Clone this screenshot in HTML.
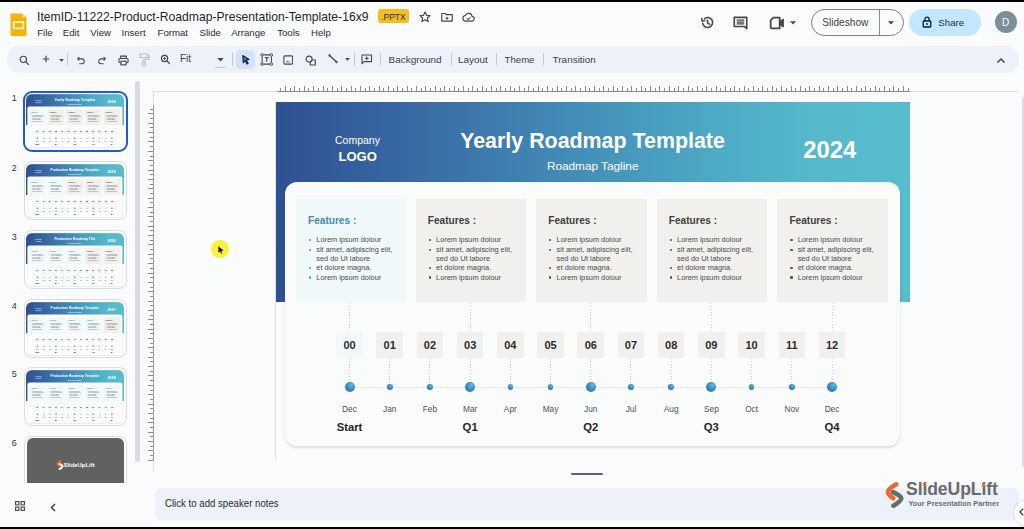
<!DOCTYPE html>
<html><head><meta charset="utf-8"><style>
html,body{margin:0;padding:0;}
body{width:1024px;height:529px;position:relative;overflow:hidden;background:#f9fbfd;font-family:'Liberation Sans', sans-serif;}
.t{position:absolute;white-space:nowrap;}
.b{position:absolute;}
</style></head><body>
<div class="b" style="left:0.00px;top:0.00px;width:1024.00px;height:2.00px;background:#000;"></div><div class="b" style="left:0.00px;top:527.00px;width:1024.00px;height:2.00px;background:#000;"></div><svg class="b" style="left:9px;top:12px" width="19" height="25" viewBox="0 0 19 25">
<path d="M1.5 1.5 h11.5 l4.5 4.5 v17 a1 1 0 0 1 -1 1 h-14 a1 1 0 0 1 -1 -1 z" fill="#f4b400"/>
<path d="M13 1.5 v4.5 h4.5 z" fill="#f7cb4d"/>
<rect x="4.6" y="10.2" width="9.8" height="6.2" fill="none" stroke="#fff" stroke-width="1.5"/>
</svg><div class="t" style="left:37.00px;top:10.70px;font-size:12.17px;line-height:12.17px;color:#1f1f1f;font-weight:400;">ItemID-11222-Product-Roadmap-Presentation-Template-16x9</div><div class="b" style="left:378.00px;top:9.30px;width:30.80px;height:14.00px;background:#f2bf1f;border-radius:3px;"></div><div class="t" style="left:193.40px;width:400px;text-align:center;top:13.00px;font-size:8.5px;line-height:8.5px;color:#2a2a2a;font-weight:400;">.PPTX</div><svg class="b" style="left:418px;top:10px" width="14" height="14" viewBox="0 0 24 24"><path d="M12 3.5l2.6 5.6 6.1.6-4.6 4.1 1.3 6-5.4-3.1-5.4 3.1 1.3-6-4.6-4.1 6.1-.6z" fill="none" stroke="#444746" stroke-width="2" stroke-linejoin="round"/></svg><svg class="b" style="left:440px;top:10px" width="14" height="14" viewBox="0 0 24 24"><path d="M3 6h6l2 2h10v11H3z" fill="none" stroke="#444746" stroke-width="2" stroke-linejoin="round"/><path d="M12 11.5v5M9.5 14h5" stroke="#444746" stroke-width="1.8"/></svg><svg class="b" style="left:461px;top:10px" width="15" height="14" viewBox="0 0 24 24"><path d="M6.5 19h11a4 4 0 0 0 .6-8A6 6 0 0 0 6.6 9.5 4.8 4.8 0 0 0 6.5 19z" fill="none" stroke="#444746" stroke-width="2"/><path d="M9 14.5l2.2 2 4-4" fill="none" stroke="#444746" stroke-width="1.8"/></svg><div class="t" style="left:37.20px;top:28.03px;font-size:9.65px;line-height:9.65px;color:#2d2d2d;font-weight:400;">File</div><div class="t" style="left:62.80px;top:28.03px;font-size:9.65px;line-height:9.65px;color:#2d2d2d;font-weight:400;">Edit</div><div class="t" style="left:90.30px;top:28.03px;font-size:9.65px;line-height:9.65px;color:#2d2d2d;font-weight:400;">View</div><div class="t" style="left:121.50px;top:28.03px;font-size:9.65px;line-height:9.65px;color:#2d2d2d;font-weight:400;">Insert</div><div class="t" style="left:157.50px;top:28.03px;font-size:9.65px;line-height:9.65px;color:#2d2d2d;font-weight:400;">Format</div><div class="t" style="left:199.50px;top:28.03px;font-size:9.65px;line-height:9.65px;color:#2d2d2d;font-weight:400;">Slide</div><div class="t" style="left:231.20px;top:28.03px;font-size:9.65px;line-height:9.65px;color:#2d2d2d;font-weight:400;">Arrange</div><div class="t" style="left:277.20px;top:28.03px;font-size:9.65px;line-height:9.65px;color:#2d2d2d;font-weight:400;">Tools</div><div class="t" style="left:311.00px;top:28.03px;font-size:9.65px;line-height:9.65px;color:#2d2d2d;font-weight:400;">Help</div><svg class="b" style="left:699.5px;top:14.5px" width="15" height="15" viewBox="0 0 24 24"><path d="M4.2 12.5a8 8 0 1 0 2.5-6.4" fill="none" stroke="#444746" stroke-width="2.6"/><path d="M2.5 4.5l1 5.2 5-1.2" fill="none" stroke="#444746" stroke-width="2.4"/><path d="M12 7v5.5l4 3" fill="none" stroke="#444746" stroke-width="2.5"/></svg><svg class="b" style="left:732.5px;top:15.5px" width="15" height="14" viewBox="0 0 24 22"><path d="M2 2h20v18l-4-3.5H2z" fill="none" stroke="#444746" stroke-width="2.6" stroke-linejoin="round"/><path d="M6 6.5h12M6 9.5h12M6 12.5h12" stroke="#444746" stroke-width="1.9"/></svg><svg class="b" style="left:769px;top:15.5px" width="16" height="14" viewBox="0 0 24 21"><path d="M6.5 2.5H16v16H4a1.5 1.5 0 0 1-1.5-1.5V6.5z" fill="none" stroke="#444746" stroke-width="2.6" stroke-linejoin="round"/><path d="M16 8l5.5-3.5v12L16 13z" fill="#444746" stroke="#444746" stroke-width="1.5" stroke-linejoin="round"/></svg><svg class="b" style="left:790px;top:20.5px" width="6" height="4" viewBox="0 0 8 5"><path d="M0 0h8L4 4.5z" fill="#444746"/></svg><div class="b" style="left:811.00px;top:9.00px;width:92.50px;height:27.00px;border:1px solid #7d7f80;border-radius:13.5px;box-sizing:border-box;"></div><div class="b" style="left:879.00px;top:9.50px;width:1.00px;height:26.00px;background:#8a8c8d;"></div><div class="t" style="left:645.30px;width:400px;text-align:center;top:18.05px;font-size:10.1px;line-height:10.1px;color:#3c3f42;font-weight:400;">Slideshow</div><svg class="b" style="left:888px;top:20.5px" width="6" height="4" viewBox="0 0 8 5"><path d="M0 0h8L4 4.5z" fill="#444746"/></svg><div class="b" style="left:909.00px;top:9.00px;width:72.00px;height:27.00px;background:#c2e7ff;border-radius:13.5px;"></div><svg class="b" style="left:921.5px;top:16px" width="10" height="12" viewBox="0 0 10 12"><rect x="1.2" y="5" width="7.6" height="6" rx="0.8" fill="none" stroke="#001d35" stroke-width="1.3"/><path d="M2.9 5V3.3a2.1 2.1 0 0 1 4.2 0V5" fill="none" stroke="#001d35" stroke-width="1.3"/><circle cx="5" cy="8" r="0.9" fill="#001d35"/></svg><div class="t" style="left:751.30px;width:400px;text-align:center;top:17.69px;font-size:9.7px;line-height:9.7px;color:#17324a;font-weight:400;">Share</div><div class="b" style="left:994.50px;top:11.00px;width:22.00px;height:22.00px;background:#7a8f99;border-radius:50%;"></div><div class="t" style="left:805.50px;width:400px;text-align:center;top:17.54px;font-size:10px;line-height:10px;color:#fff;font-weight:400;">D</div><div class="b" style="left:6.50px;top:46.00px;width:1012.00px;height:26.50px;background:#edf2fa;border-radius:13px;"></div><svg class="b" style="left:18.5px;top:54.5px" width="11" height="11" viewBox="0 0 24 24"><circle cx="9.5" cy="9.5" r="6.8" fill="none" stroke="#444746" stroke-width="2.6"/><path d="M14.5 14.5l7 7" stroke="#444746" stroke-width="2.8"/></svg><svg class="b" style="left:42.3px;top:55.3px" width="8" height="8" viewBox="0 0 24 24"><path d="M12 2v20M2 12h20" stroke="#444746" stroke-width="3.6"/></svg><svg class="b" style="left:58.7px;top:58.6px" width="5" height="3" viewBox="0 0 8 5"><path d="M0 0h8L4 4.5z" fill="#444746"/></svg><div class="b" style="left:67.00px;top:53.00px;width:1.00px;height:13.00px;background:#c7c7c7;"></div><svg class="b" style="left:76px;top:55.5px" width="10" height="9" viewBox="0 0 24 22"><path d="M8 3L4 7l4 4" fill="none" stroke="#444746" stroke-width="2.6"/><path d="M4.5 7H14a6 6 0 0 1 0 12H8" fill="none" stroke="#444746" stroke-width="2.6"/></svg><svg class="b" style="left:97px;top:55.5px" width="10" height="9" viewBox="0 0 24 22"><path d="M16 3l4 4-4 4" fill="none" stroke="#444746" stroke-width="2.6"/><path d="M19.5 7H10a6 6 0 0 0 0 12h6" fill="none" stroke="#444746" stroke-width="2.6"/></svg><svg class="b" style="left:117.5px;top:54.5px" width="11" height="11" viewBox="0 0 24 24"><path d="M6 7V2.5h12V7" fill="none" stroke="#444746" stroke-width="2.4"/><rect x="2" y="7.5" width="20" height="9.5" rx="2.5" fill="none" stroke="#444746" stroke-width="2.4"/><rect x="6.5" y="13.5" width="11" height="8" fill="#edf2fa" stroke="#444746" stroke-width="2.4"/></svg><svg class="b" style="left:138px;top:52.5px" width="12" height="14" viewBox="0 0 24 28"><rect x="4" y="2" width="16" height="7" rx="1.5" fill="none" stroke="#b9bcbf" stroke-width="2.4"/><path d="M20 5.5h2v7H12v4" fill="none" stroke="#b9bcbf" stroke-width="2.4"/><rect x="9.5" y="16.5" width="5" height="9" rx="1.5" fill="none" stroke="#b9bcbf" stroke-width="2.4"/></svg><svg class="b" style="left:160px;top:54px" width="11.5" height="11.5" viewBox="0 0 24 24"><circle cx="9.5" cy="9.5" r="6.5" fill="none" stroke="#444746" stroke-width="2.4"/><path d="M14.5 14.5l6 6" stroke="#444746" stroke-width="2.6"/><path d="M9.5 6.5v6M6.5 9.5h6" stroke="#444746" stroke-width="2"/></svg><div class="t" style="left:180.00px;top:54.23px;font-size:10px;line-height:10px;color:#3c4043;font-weight:400;">Fit</div><svg class="b" style="left:217px;top:57.5px" width="7" height="4" viewBox="0 0 8 5"><path d="M0 0h8L4 4.5z" fill="#444746"/></svg><div class="b" style="left:215.00px;top:66.50px;width:11.00px;height:1.00px;background:#c7c7c7;"></div><div class="b" style="left:232.00px;top:53.00px;width:1.00px;height:13.00px;background:#c7c7c7;"></div><div class="b" style="left:236.00px;top:49.50px;width:19.00px;height:19.50px;background:#d3e3fd;border-radius:4px;"></div><svg class="b" style="left:240.5px;top:54px" width="10" height="12" viewBox="0 0 20 24"><path d="M3.5 3l12.5 8-5.2 1.3 3.6 6.5-2.4 1.4-3.6-6.5L4.5 17.5z" fill="#5b6f99" stroke="#0f2350" stroke-width="2.2" stroke-linejoin="round"/></svg><svg class="b" style="left:259.8px;top:53px" width="13.5" height="13" viewBox="0 0 24 24"><path d="M6 3.5h12M6 20.5h12M3.5 6v12M20.5 6v12" stroke="#444746" stroke-width="2"/><circle cx="3.5" cy="3.5" r="2.3" fill="#edf2fa" stroke="#444746" stroke-width="1.8"/><circle cx="20.5" cy="3.5" r="2.3" fill="#edf2fa" stroke="#444746" stroke-width="1.8"/><circle cx="3.5" cy="20.5" r="2.3" fill="#edf2fa" stroke="#444746" stroke-width="1.8"/><circle cx="20.5" cy="20.5" r="2.3" fill="#edf2fa" stroke="#444746" stroke-width="1.8"/><path d="M8.5 8.5h7M12 8.5v7.5" stroke="#444746" stroke-width="2"/></svg><svg class="b" style="left:282.6px;top:54.6px" width="10.5" height="10" viewBox="0 0 24 23"><rect x="2" y="2" width="20" height="19" rx="2.5" fill="none" stroke="#444746" stroke-width="2.4"/><path d="M7 16.5l2.5-3 2 2.2 1.8-1.6 3.5 2.4z" fill="#444746"/></svg><svg class="b" style="left:305px;top:54.5px" width="11.5" height="11" viewBox="0 0 24 23"><circle cx="8.5" cy="8.5" r="6.3" fill="none" stroke="#444746" stroke-width="2.4"/><path d="M14.8 10.5H21.5V21H11V14.8" fill="none" stroke="#444746" stroke-width="2.4"/></svg><svg class="b" style="left:327.5px;top:54.3px" width="10" height="9.5" viewBox="0 0 20 19"><path d="M3 3l14 13" stroke="#444746" stroke-width="2.6"/><circle cx="3" cy="3" r="2.3" fill="#444746"/><circle cx="17" cy="16" r="2.3" fill="#444746"/></svg><svg class="b" style="left:344.6px;top:58.4px" width="5" height="3" viewBox="0 0 8 5"><path d="M0 0h8L4 4.5z" fill="#444746"/></svg><div class="b" style="left:354.00px;top:53.00px;width:1.00px;height:13.00px;background:#c7c7c7;"></div><svg class="b" style="left:361px;top:54.3px" width="11.5" height="10.5" viewBox="0 0 24 22"><path d="M2 2h20v14H6l-4 4.5z" fill="none" stroke="#444746" stroke-width="2.3" stroke-linejoin="round"/><path d="M12 5v8M8 9h8" stroke="#444746" stroke-width="2.3"/></svg><div class="b" style="left:380.00px;top:53.00px;width:1.00px;height:13.00px;background:#c7c7c7;"></div><div class="t" style="left:388.60px;top:54.88px;font-size:9.95px;line-height:9.95px;color:#3c4043;font-weight:400;">Background</div><div class="t" style="left:458.00px;top:54.88px;font-size:9.95px;line-height:9.95px;color:#3c4043;font-weight:400;">Layout</div><div class="t" style="left:504.60px;top:55.17px;font-size:9.6px;line-height:9.6px;color:#3c4043;font-weight:400;">Theme</div><div class="t" style="left:552.60px;top:54.88px;font-size:9.95px;line-height:9.95px;color:#3c4043;font-weight:400;">Transition</div><div class="b" style="left:450.50px;top:53.00px;width:1.00px;height:13.00px;background:#c7c7c7;"></div><div class="b" style="left:495.50px;top:53.00px;width:1.00px;height:13.00px;background:#c7c7c7;"></div><div class="b" style="left:543.00px;top:53.00px;width:1.00px;height:13.00px;background:#c7c7c7;"></div><svg class="b" style="left:995.5px;top:56.5px" width="10" height="7" viewBox="0 0 10 7"><path d="M1.5 5.5l3.5-3.5 3.5 3.5" fill="none" stroke="#444746" stroke-width="1.5"/></svg><div class="b" style="left:134.50px;top:81.00px;width:5.50px;height:381.00px;background:#dadce0;border-radius:3px;"></div><div class="b" style="left:0;top:80px;width:133px;height:403px;overflow:hidden"><div class="b" style="left:0;top:-80px;width:133px;height:529px"><div class="t" style="left:-185.80px;width:400px;text-align:center;top:94.48px;font-size:9px;line-height:9px;color:#333537;font-weight:400;">1</div><div class="b" style="left:22.80px;top:90.80px;width:105.20px;height:61.50px;border:2.2px solid #1f5bc9;border-radius:9px;box-sizing:border-box;"></div><div class="b" style="left:26.3px;top:93.80px;width:98px;height:55.4px;overflow:hidden;border-radius:6px;"><div class="b" style="left:0;top:0;width:634px;height:358px;transform:scale(0.15457);transform-origin:0 0;background:#fbfbfb"><div class="b" style="left:0.00px;top:0.80px;width:634.00px;height:200.40px;background:linear-gradient(90deg,#2e5092 0%,#3a6ea7 25%,#4491ba 50%,#4dabc5 70%,#55b9cb 85%,#57bccc 100%);"></div><div class="t" style="left:-118.50px;width:400px;text-align:center;top:33.91px;font-size:10.5px;line-height:10.5px;color:#fff;font-weight:400;">Company</div><div class="t" style="left:-118.40px;width:400px;text-align:center;top:49.40px;font-size:13px;line-height:13px;color:#fff;font-weight:700;">LOGO</div><div class="t" style="left:116.50px;width:400px;text-align:center;top:29.58px;font-size:21.4px;line-height:21.4px;color:#fff;font-weight:700;">Yearly Roadmap Template</div><div class="t" style="left:116.70px;width:400px;text-align:center;top:59.81px;font-size:11.8px;line-height:11.8px;color:#fff;font-weight:400;">Roadmap Tagline</div><div class="t" style="left:353.80px;width:400px;text-align:center;top:37.25px;font-size:23.8px;line-height:23.8px;color:#fff;font-weight:700;">2024</div><div class="b" style="left:9.00px;top:81.00px;width:615.00px;height:264.00px;background:#fafbfb;border-radius:12px;box-shadow:0 2px 3px rgba(0,0,0,0.13);"></div><div class="b" style="left:20.00px;top:98.20px;width:110.40px;height:103.30px;background:#f0f8fa;"></div><div class="t" style="left:32.00px;top:114.95px;font-size:10.1px;line-height:10.1px;color:#3d8db0;font-weight:700;">Features :</div><div class="b" style="left:33.00px;top:137.60px;width:2.20px;height:2.20px;border-radius:50%;background:#4aa0c0;"></div><div class="t" style="left:40.30px;top:134.98px;font-size:7.35px;line-height:7.35px;color:#474b4d;font-weight:400;">Lorem ipsum dolour</div><div class="b" style="left:33.00px;top:147.60px;width:2.20px;height:2.20px;border-radius:50%;background:#4aa0c0;"></div><div class="t" style="left:40.30px;top:144.98px;font-size:7.35px;line-height:7.35px;color:#474b4d;font-weight:400;">sit amet, adipiscing elit,</div><div class="t" style="left:40.30px;top:153.98px;font-size:7.35px;line-height:7.35px;color:#474b4d;font-weight:400;">sed do Ut labore</div><div class="b" style="left:33.00px;top:166.10px;width:2.20px;height:2.20px;border-radius:50%;background:#4aa0c0;"></div><div class="t" style="left:40.30px;top:163.48px;font-size:7.35px;line-height:7.35px;color:#474b4d;font-weight:400;">et dolore magna.</div><div class="b" style="left:33.00px;top:175.40px;width:2.20px;height:2.20px;border-radius:50%;background:#4aa0c0;"></div><div class="t" style="left:40.30px;top:172.78px;font-size:7.35px;line-height:7.35px;color:#474b4d;font-weight:400;">Lorem ipsum dolour</div><div class="b" style="left:139.80px;top:98.20px;width:110.40px;height:103.30px;background:#f1f0ed;"></div><div class="t" style="left:151.80px;top:114.95px;font-size:10.1px;line-height:10.1px;color:#3f3f3f;font-weight:700;">Features :</div><div class="b" style="left:152.80px;top:137.60px;width:2.20px;height:2.20px;border-radius:50%;background:#555;"></div><div class="t" style="left:160.10px;top:134.98px;font-size:7.35px;line-height:7.35px;color:#474b4d;font-weight:400;">Lorem ipsum dolour</div><div class="b" style="left:152.80px;top:147.60px;width:2.20px;height:2.20px;border-radius:50%;background:#555;"></div><div class="t" style="left:160.10px;top:144.98px;font-size:7.35px;line-height:7.35px;color:#474b4d;font-weight:400;">sit amet, adipiscing elit,</div><div class="t" style="left:160.10px;top:153.98px;font-size:7.35px;line-height:7.35px;color:#474b4d;font-weight:400;">sed do Ut labore</div><div class="b" style="left:152.80px;top:166.10px;width:2.20px;height:2.20px;border-radius:50%;background:#555;"></div><div class="t" style="left:160.10px;top:163.48px;font-size:7.35px;line-height:7.35px;color:#474b4d;font-weight:400;">et dolore magna.</div><div class="b" style="left:152.80px;top:175.40px;width:2.20px;height:2.20px;border-radius:50%;background:#555;"></div><div class="t" style="left:160.10px;top:172.78px;font-size:7.35px;line-height:7.35px;color:#474b4d;font-weight:400;">Lorem ipsum dolour</div><div class="b" style="left:260.30px;top:98.20px;width:110.40px;height:103.30px;background:#f1f0ed;"></div><div class="t" style="left:272.30px;top:114.95px;font-size:10.1px;line-height:10.1px;color:#3f3f3f;font-weight:700;">Features :</div><div class="b" style="left:273.30px;top:137.60px;width:2.20px;height:2.20px;border-radius:50%;background:#555;"></div><div class="t" style="left:280.60px;top:134.98px;font-size:7.35px;line-height:7.35px;color:#474b4d;font-weight:400;">Lorem ipsum dolour</div><div class="b" style="left:273.30px;top:147.60px;width:2.20px;height:2.20px;border-radius:50%;background:#555;"></div><div class="t" style="left:280.60px;top:144.98px;font-size:7.35px;line-height:7.35px;color:#474b4d;font-weight:400;">sit amet, adipiscing elit,</div><div class="t" style="left:280.60px;top:153.98px;font-size:7.35px;line-height:7.35px;color:#474b4d;font-weight:400;">sed do Ut labore</div><div class="b" style="left:273.30px;top:166.10px;width:2.20px;height:2.20px;border-radius:50%;background:#555;"></div><div class="t" style="left:280.60px;top:163.48px;font-size:7.35px;line-height:7.35px;color:#474b4d;font-weight:400;">et dolore magna.</div><div class="b" style="left:273.30px;top:175.40px;width:2.20px;height:2.20px;border-radius:50%;background:#555;"></div><div class="t" style="left:280.60px;top:172.78px;font-size:7.35px;line-height:7.35px;color:#474b4d;font-weight:400;">Lorem ipsum dolour</div><div class="b" style="left:380.80px;top:98.20px;width:110.40px;height:103.30px;background:#f1f0ed;"></div><div class="t" style="left:392.80px;top:114.95px;font-size:10.1px;line-height:10.1px;color:#3f3f3f;font-weight:700;">Features :</div><div class="b" style="left:393.80px;top:137.60px;width:2.20px;height:2.20px;border-radius:50%;background:#555;"></div><div class="t" style="left:401.10px;top:134.98px;font-size:7.35px;line-height:7.35px;color:#474b4d;font-weight:400;">Lorem ipsum dolour</div><div class="b" style="left:393.80px;top:147.60px;width:2.20px;height:2.20px;border-radius:50%;background:#555;"></div><div class="t" style="left:401.10px;top:144.98px;font-size:7.35px;line-height:7.35px;color:#474b4d;font-weight:400;">sit amet, adipiscing elit,</div><div class="t" style="left:401.10px;top:153.98px;font-size:7.35px;line-height:7.35px;color:#474b4d;font-weight:400;">sed do Ut labore</div><div class="b" style="left:393.80px;top:166.10px;width:2.20px;height:2.20px;border-radius:50%;background:#555;"></div><div class="t" style="left:401.10px;top:163.48px;font-size:7.35px;line-height:7.35px;color:#474b4d;font-weight:400;">et dolore magna.</div><div class="b" style="left:393.80px;top:175.40px;width:2.20px;height:2.20px;border-radius:50%;background:#555;"></div><div class="t" style="left:401.10px;top:172.78px;font-size:7.35px;line-height:7.35px;color:#474b4d;font-weight:400;">Lorem ipsum dolour</div><div class="b" style="left:501.40px;top:98.20px;width:110.40px;height:103.30px;background:#f1f0ed;"></div><div class="t" style="left:513.40px;top:114.95px;font-size:10.1px;line-height:10.1px;color:#3f3f3f;font-weight:700;">Features :</div><div class="b" style="left:514.40px;top:137.60px;width:2.20px;height:2.20px;border-radius:50%;background:#555;"></div><div class="t" style="left:521.70px;top:134.98px;font-size:7.35px;line-height:7.35px;color:#474b4d;font-weight:400;">Lorem ipsum dolour</div><div class="b" style="left:514.40px;top:147.60px;width:2.20px;height:2.20px;border-radius:50%;background:#555;"></div><div class="t" style="left:521.70px;top:144.98px;font-size:7.35px;line-height:7.35px;color:#474b4d;font-weight:400;">sit amet, adipiscing elit,</div><div class="t" style="left:521.70px;top:153.98px;font-size:7.35px;line-height:7.35px;color:#474b4d;font-weight:400;">sed do Ut labore</div><div class="b" style="left:514.40px;top:166.10px;width:2.20px;height:2.20px;border-radius:50%;background:#555;"></div><div class="t" style="left:521.70px;top:163.48px;font-size:7.35px;line-height:7.35px;color:#474b4d;font-weight:400;">et dolore magna.</div><div class="b" style="left:514.40px;top:175.40px;width:2.20px;height:2.20px;border-radius:50%;background:#555;"></div><div class="t" style="left:521.70px;top:172.78px;font-size:7.35px;line-height:7.35px;color:#474b4d;font-weight:400;">Lorem ipsum dolour</div><div class="b" style="left:73.00px;top:201.50px;width:1.00px;height:29.00px;background:repeating-linear-gradient(to bottom,#cfcfcf 0 1px,transparent 1px 3px);"></div><div class="b" style="left:73.00px;top:256.50px;width:1.00px;height:28.00px;background:repeating-linear-gradient(to bottom,#cfcfcf 0 1px,transparent 1px 3px);"></div><div class="b" style="left:113.21px;top:256.50px;width:1.00px;height:28.00px;background:repeating-linear-gradient(to bottom,#cfcfcf 0 1px,transparent 1px 3px);"></div><div class="b" style="left:153.42px;top:256.50px;width:1.00px;height:28.00px;background:repeating-linear-gradient(to bottom,#cfcfcf 0 1px,transparent 1px 3px);"></div><div class="b" style="left:193.63px;top:201.50px;width:1.00px;height:29.00px;background:repeating-linear-gradient(to bottom,#cfcfcf 0 1px,transparent 1px 3px);"></div><div class="b" style="left:193.63px;top:256.50px;width:1.00px;height:28.00px;background:repeating-linear-gradient(to bottom,#cfcfcf 0 1px,transparent 1px 3px);"></div><div class="b" style="left:233.84px;top:256.50px;width:1.00px;height:28.00px;background:repeating-linear-gradient(to bottom,#cfcfcf 0 1px,transparent 1px 3px);"></div><div class="b" style="left:274.05px;top:256.50px;width:1.00px;height:28.00px;background:repeating-linear-gradient(to bottom,#cfcfcf 0 1px,transparent 1px 3px);"></div><div class="b" style="left:314.26px;top:201.50px;width:1.00px;height:29.00px;background:repeating-linear-gradient(to bottom,#cfcfcf 0 1px,transparent 1px 3px);"></div><div class="b" style="left:314.26px;top:256.50px;width:1.00px;height:28.00px;background:repeating-linear-gradient(to bottom,#cfcfcf 0 1px,transparent 1px 3px);"></div><div class="b" style="left:354.47px;top:256.50px;width:1.00px;height:28.00px;background:repeating-linear-gradient(to bottom,#cfcfcf 0 1px,transparent 1px 3px);"></div><div class="b" style="left:394.68px;top:256.50px;width:1.00px;height:28.00px;background:repeating-linear-gradient(to bottom,#cfcfcf 0 1px,transparent 1px 3px);"></div><div class="b" style="left:434.89px;top:201.50px;width:1.00px;height:29.00px;background:repeating-linear-gradient(to bottom,#cfcfcf 0 1px,transparent 1px 3px);"></div><div class="b" style="left:434.89px;top:256.50px;width:1.00px;height:28.00px;background:repeating-linear-gradient(to bottom,#cfcfcf 0 1px,transparent 1px 3px);"></div><div class="b" style="left:475.10px;top:256.50px;width:1.00px;height:28.00px;background:repeating-linear-gradient(to bottom,#cfcfcf 0 1px,transparent 1px 3px);"></div><div class="b" style="left:515.31px;top:256.50px;width:1.00px;height:28.00px;background:repeating-linear-gradient(to bottom,#cfcfcf 0 1px,transparent 1px 3px);"></div><div class="b" style="left:555.52px;top:201.50px;width:1.00px;height:29.00px;background:repeating-linear-gradient(to bottom,#cfcfcf 0 1px,transparent 1px 3px);"></div><div class="b" style="left:555.52px;top:256.50px;width:1.00px;height:28.00px;background:repeating-linear-gradient(to bottom,#cfcfcf 0 1px,transparent 1px 3px);"></div><div class="b" style="left:73.50px;top:285.50px;width:482.52px;height:1.00px;background:repeating-linear-gradient(to right,#e2e2e2 0 2px,transparent 2px 3px);"></div><div class="b" style="left:60.20px;top:230.50px;width:26.60px;height:26.50px;background:#f0f8fa;"></div><div class="t" style="left:-126.50px;width:400px;text-align:center;top:239.19px;font-size:11px;line-height:11px;color:#2b2b2b;font-weight:700;">00</div><div class="b" style="left:68.50px;top:281.00px;width:10.00px;height:10.00px;border-radius:50%;background:radial-gradient(circle at 65% 32%,#66b9dc 0%,#3c92c2 40%,#2a67a2 100%);"></div><div class="t" style="left:-126.50px;width:400px;text-align:center;top:303.97px;font-size:8.3px;line-height:8.3px;color:#505050;font-weight:400;">Dec</div><div class="t" style="left:-126.50px;width:400px;text-align:center;top:320.63px;font-size:11.3px;line-height:11.3px;color:#262626;font-weight:700;">Start</div><div class="b" style="left:100.41px;top:230.50px;width:26.60px;height:26.50px;background:#f1f0ed;"></div><div class="t" style="left:-86.29px;width:400px;text-align:center;top:239.19px;font-size:11px;line-height:11px;color:#2b2b2b;font-weight:700;">01</div><div class="b" style="left:110.91px;top:283.20px;width:5.60px;height:5.60px;border-radius:50%;background:radial-gradient(circle at 65% 32%,#66b9dc 0%,#3c92c2 40%,#2a67a2 100%);"></div><div class="t" style="left:-86.29px;width:400px;text-align:center;top:303.97px;font-size:8.3px;line-height:8.3px;color:#505050;font-weight:400;">Jan</div><div class="b" style="left:140.62px;top:230.50px;width:26.60px;height:26.50px;background:#f1f0ed;"></div><div class="t" style="left:-46.08px;width:400px;text-align:center;top:239.19px;font-size:11px;line-height:11px;color:#2b2b2b;font-weight:700;">02</div><div class="b" style="left:151.12px;top:283.20px;width:5.60px;height:5.60px;border-radius:50%;background:radial-gradient(circle at 65% 32%,#66b9dc 0%,#3c92c2 40%,#2a67a2 100%);"></div><div class="t" style="left:-46.08px;width:400px;text-align:center;top:303.97px;font-size:8.3px;line-height:8.3px;color:#505050;font-weight:400;">Feb</div><div class="b" style="left:180.83px;top:230.50px;width:26.60px;height:26.50px;background:#f1f0ed;"></div><div class="t" style="left:-5.87px;width:400px;text-align:center;top:239.19px;font-size:11px;line-height:11px;color:#2b2b2b;font-weight:700;">03</div><div class="b" style="left:189.13px;top:281.00px;width:10.00px;height:10.00px;border-radius:50%;background:radial-gradient(circle at 65% 32%,#66b9dc 0%,#3c92c2 40%,#2a67a2 100%);"></div><div class="t" style="left:-5.87px;width:400px;text-align:center;top:303.97px;font-size:8.3px;line-height:8.3px;color:#505050;font-weight:400;">Mar</div><div class="t" style="left:-5.87px;width:400px;text-align:center;top:320.63px;font-size:11.3px;line-height:11.3px;color:#262626;font-weight:700;">Q1</div><div class="b" style="left:221.04px;top:230.50px;width:26.60px;height:26.50px;background:#f1f0ed;"></div><div class="t" style="left:34.34px;width:400px;text-align:center;top:239.19px;font-size:11px;line-height:11px;color:#2b2b2b;font-weight:700;">04</div><div class="b" style="left:231.54px;top:283.20px;width:5.60px;height:5.60px;border-radius:50%;background:radial-gradient(circle at 65% 32%,#66b9dc 0%,#3c92c2 40%,#2a67a2 100%);"></div><div class="t" style="left:34.34px;width:400px;text-align:center;top:303.97px;font-size:8.3px;line-height:8.3px;color:#505050;font-weight:400;">Apr</div><div class="b" style="left:261.25px;top:230.50px;width:26.60px;height:26.50px;background:#f1f0ed;"></div><div class="t" style="left:74.55px;width:400px;text-align:center;top:239.19px;font-size:11px;line-height:11px;color:#2b2b2b;font-weight:700;">05</div><div class="b" style="left:271.75px;top:283.20px;width:5.60px;height:5.60px;border-radius:50%;background:radial-gradient(circle at 65% 32%,#66b9dc 0%,#3c92c2 40%,#2a67a2 100%);"></div><div class="t" style="left:74.55px;width:400px;text-align:center;top:303.97px;font-size:8.3px;line-height:8.3px;color:#505050;font-weight:400;">May</div><div class="b" style="left:301.46px;top:230.50px;width:26.60px;height:26.50px;background:#f1f0ed;"></div><div class="t" style="left:114.76px;width:400px;text-align:center;top:239.19px;font-size:11px;line-height:11px;color:#2b2b2b;font-weight:700;">06</div><div class="b" style="left:309.76px;top:281.00px;width:10.00px;height:10.00px;border-radius:50%;background:radial-gradient(circle at 65% 32%,#66b9dc 0%,#3c92c2 40%,#2a67a2 100%);"></div><div class="t" style="left:114.76px;width:400px;text-align:center;top:303.97px;font-size:8.3px;line-height:8.3px;color:#505050;font-weight:400;">Jun</div><div class="t" style="left:114.76px;width:400px;text-align:center;top:320.63px;font-size:11.3px;line-height:11.3px;color:#262626;font-weight:700;">Q2</div><div class="b" style="left:341.67px;top:230.50px;width:26.60px;height:26.50px;background:#f1f0ed;"></div><div class="t" style="left:154.97px;width:400px;text-align:center;top:239.19px;font-size:11px;line-height:11px;color:#2b2b2b;font-weight:700;">07</div><div class="b" style="left:352.17px;top:283.20px;width:5.60px;height:5.60px;border-radius:50%;background:radial-gradient(circle at 65% 32%,#66b9dc 0%,#3c92c2 40%,#2a67a2 100%);"></div><div class="t" style="left:154.97px;width:400px;text-align:center;top:303.97px;font-size:8.3px;line-height:8.3px;color:#505050;font-weight:400;">Jul</div><div class="b" style="left:381.88px;top:230.50px;width:26.60px;height:26.50px;background:#f1f0ed;"></div><div class="t" style="left:195.18px;width:400px;text-align:center;top:239.19px;font-size:11px;line-height:11px;color:#2b2b2b;font-weight:700;">08</div><div class="b" style="left:392.38px;top:283.20px;width:5.60px;height:5.60px;border-radius:50%;background:radial-gradient(circle at 65% 32%,#66b9dc 0%,#3c92c2 40%,#2a67a2 100%);"></div><div class="t" style="left:195.18px;width:400px;text-align:center;top:303.97px;font-size:8.3px;line-height:8.3px;color:#505050;font-weight:400;">Aug</div><div class="b" style="left:422.09px;top:230.50px;width:26.60px;height:26.50px;background:#f1f0ed;"></div><div class="t" style="left:235.39px;width:400px;text-align:center;top:239.19px;font-size:11px;line-height:11px;color:#2b2b2b;font-weight:700;">09</div><div class="b" style="left:430.39px;top:281.00px;width:10.00px;height:10.00px;border-radius:50%;background:radial-gradient(circle at 65% 32%,#66b9dc 0%,#3c92c2 40%,#2a67a2 100%);"></div><div class="t" style="left:235.39px;width:400px;text-align:center;top:303.97px;font-size:8.3px;line-height:8.3px;color:#505050;font-weight:400;">Sep</div><div class="t" style="left:235.39px;width:400px;text-align:center;top:320.63px;font-size:11.3px;line-height:11.3px;color:#262626;font-weight:700;">Q3</div><div class="b" style="left:462.30px;top:230.50px;width:26.60px;height:26.50px;background:#f1f0ed;"></div><div class="t" style="left:275.60px;width:400px;text-align:center;top:239.19px;font-size:11px;line-height:11px;color:#2b2b2b;font-weight:700;">10</div><div class="b" style="left:472.80px;top:283.20px;width:5.60px;height:5.60px;border-radius:50%;background:radial-gradient(circle at 65% 32%,#66b9dc 0%,#3c92c2 40%,#2a67a2 100%);"></div><div class="t" style="left:275.60px;width:400px;text-align:center;top:303.97px;font-size:8.3px;line-height:8.3px;color:#505050;font-weight:400;">Oct</div><div class="b" style="left:502.51px;top:230.50px;width:26.60px;height:26.50px;background:#f1f0ed;"></div><div class="t" style="left:315.81px;width:400px;text-align:center;top:239.19px;font-size:11px;line-height:11px;color:#2b2b2b;font-weight:700;">11</div><div class="b" style="left:513.01px;top:283.20px;width:5.60px;height:5.60px;border-radius:50%;background:radial-gradient(circle at 65% 32%,#66b9dc 0%,#3c92c2 40%,#2a67a2 100%);"></div><div class="t" style="left:315.81px;width:400px;text-align:center;top:303.97px;font-size:8.3px;line-height:8.3px;color:#505050;font-weight:400;">Nov</div><div class="b" style="left:542.72px;top:230.50px;width:26.60px;height:26.50px;background:#f1f0ed;"></div><div class="t" style="left:356.02px;width:400px;text-align:center;top:239.19px;font-size:11px;line-height:11px;color:#2b2b2b;font-weight:700;">12</div><div class="b" style="left:551.02px;top:281.00px;width:10.00px;height:10.00px;border-radius:50%;background:radial-gradient(circle at 65% 32%,#66b9dc 0%,#3c92c2 40%,#2a67a2 100%);"></div><div class="t" style="left:356.02px;width:400px;text-align:center;top:303.97px;font-size:8.3px;line-height:8.3px;color:#505050;font-weight:400;">Dec</div><div class="t" style="left:356.02px;width:400px;text-align:center;top:320.63px;font-size:11.3px;line-height:11.3px;color:#262626;font-weight:700;">Q4</div></div></div><div class="t" style="left:-185.80px;width:400px;text-align:center;top:164.48px;font-size:9px;line-height:9px;color:#333537;font-weight:400;">2</div><div class="b" style="left:24.00px;top:161.00px;width:102.50px;height:59.20px;border:1px solid #dadce0;border-radius:8px;box-sizing:border-box;background:#fbfbfb;"></div><div class="b" style="left:26.3px;top:163.80px;width:98px;height:55.4px;overflow:hidden;border-radius:6px;"><div class="b" style="left:0;top:0;width:634px;height:358px;transform:scale(0.15457);transform-origin:0 0;background:#fbfbfb"><div class="b" style="left:0.00px;top:0.80px;width:634.00px;height:200.40px;background:linear-gradient(90deg,#2e5092 0%,#3a6ea7 25%,#4491ba 50%,#4dabc5 70%,#55b9cb 85%,#57bccc 100%);"></div><div class="t" style="left:-118.50px;width:400px;text-align:center;top:33.91px;font-size:10.5px;line-height:10.5px;color:#fff;font-weight:400;">Company</div><div class="t" style="left:-118.40px;width:400px;text-align:center;top:49.40px;font-size:13px;line-height:13px;color:#fff;font-weight:700;">LOGO</div><div class="t" style="left:116.50px;width:400px;text-align:center;top:29.58px;font-size:21.4px;line-height:21.4px;color:#fff;font-weight:700;">Production Roadmap Template</div><div class="t" style="left:116.70px;width:400px;text-align:center;top:59.81px;font-size:11.8px;line-height:11.8px;color:#fff;font-weight:400;">Roadmap Tagline</div><div class="t" style="left:353.80px;width:400px;text-align:center;top:37.25px;font-size:23.8px;line-height:23.8px;color:#fff;font-weight:700;">2025</div><div class="b" style="left:9.00px;top:81.00px;width:615.00px;height:264.00px;background:#fafbfb;border-radius:12px;box-shadow:0 2px 3px rgba(0,0,0,0.13);"></div><div class="b" style="left:20.00px;top:98.20px;width:110.40px;height:103.30px;background:#f0f8fa;"></div><div class="t" style="left:32.00px;top:114.95px;font-size:10.1px;line-height:10.1px;color:#3d8db0;font-weight:700;">Features :</div><div class="b" style="left:33.00px;top:137.60px;width:2.20px;height:2.20px;border-radius:50%;background:#4aa0c0;"></div><div class="t" style="left:40.30px;top:134.98px;font-size:7.35px;line-height:7.35px;color:#474b4d;font-weight:400;">Lorem ipsum dolour</div><div class="b" style="left:33.00px;top:147.60px;width:2.20px;height:2.20px;border-radius:50%;background:#4aa0c0;"></div><div class="t" style="left:40.30px;top:144.98px;font-size:7.35px;line-height:7.35px;color:#474b4d;font-weight:400;">sit amet, adipiscing elit,</div><div class="t" style="left:40.30px;top:153.98px;font-size:7.35px;line-height:7.35px;color:#474b4d;font-weight:400;">sed do Ut labore</div><div class="b" style="left:33.00px;top:166.10px;width:2.20px;height:2.20px;border-radius:50%;background:#4aa0c0;"></div><div class="t" style="left:40.30px;top:163.48px;font-size:7.35px;line-height:7.35px;color:#474b4d;font-weight:400;">et dolore magna.</div><div class="b" style="left:33.00px;top:175.40px;width:2.20px;height:2.20px;border-radius:50%;background:#4aa0c0;"></div><div class="t" style="left:40.30px;top:172.78px;font-size:7.35px;line-height:7.35px;color:#474b4d;font-weight:400;">Lorem ipsum dolour</div><div class="b" style="left:139.80px;top:98.20px;width:110.40px;height:103.30px;background:#f0f8fa;"></div><div class="t" style="left:151.80px;top:114.95px;font-size:10.1px;line-height:10.1px;color:#3d8db0;font-weight:700;">Features :</div><div class="b" style="left:152.80px;top:137.60px;width:2.20px;height:2.20px;border-radius:50%;background:#4aa0c0;"></div><div class="t" style="left:160.10px;top:134.98px;font-size:7.35px;line-height:7.35px;color:#474b4d;font-weight:400;">Lorem ipsum dolour</div><div class="b" style="left:152.80px;top:147.60px;width:2.20px;height:2.20px;border-radius:50%;background:#4aa0c0;"></div><div class="t" style="left:160.10px;top:144.98px;font-size:7.35px;line-height:7.35px;color:#474b4d;font-weight:400;">sit amet, adipiscing elit,</div><div class="t" style="left:160.10px;top:153.98px;font-size:7.35px;line-height:7.35px;color:#474b4d;font-weight:400;">sed do Ut labore</div><div class="b" style="left:152.80px;top:166.10px;width:2.20px;height:2.20px;border-radius:50%;background:#4aa0c0;"></div><div class="t" style="left:160.10px;top:163.48px;font-size:7.35px;line-height:7.35px;color:#474b4d;font-weight:400;">et dolore magna.</div><div class="b" style="left:152.80px;top:175.40px;width:2.20px;height:2.20px;border-radius:50%;background:#4aa0c0;"></div><div class="t" style="left:160.10px;top:172.78px;font-size:7.35px;line-height:7.35px;color:#474b4d;font-weight:400;">Lorem ipsum dolour</div><div class="b" style="left:260.30px;top:98.20px;width:110.40px;height:103.30px;background:#f1f0ed;"></div><div class="t" style="left:272.30px;top:114.95px;font-size:10.1px;line-height:10.1px;color:#3f3f3f;font-weight:700;">Features :</div><div class="b" style="left:273.30px;top:137.60px;width:2.20px;height:2.20px;border-radius:50%;background:#555;"></div><div class="t" style="left:280.60px;top:134.98px;font-size:7.35px;line-height:7.35px;color:#474b4d;font-weight:400;">Lorem ipsum dolour</div><div class="b" style="left:273.30px;top:147.60px;width:2.20px;height:2.20px;border-radius:50%;background:#555;"></div><div class="t" style="left:280.60px;top:144.98px;font-size:7.35px;line-height:7.35px;color:#474b4d;font-weight:400;">sit amet, adipiscing elit,</div><div class="t" style="left:280.60px;top:153.98px;font-size:7.35px;line-height:7.35px;color:#474b4d;font-weight:400;">sed do Ut labore</div><div class="b" style="left:273.30px;top:166.10px;width:2.20px;height:2.20px;border-radius:50%;background:#555;"></div><div class="t" style="left:280.60px;top:163.48px;font-size:7.35px;line-height:7.35px;color:#474b4d;font-weight:400;">et dolore magna.</div><div class="b" style="left:273.30px;top:175.40px;width:2.20px;height:2.20px;border-radius:50%;background:#555;"></div><div class="t" style="left:280.60px;top:172.78px;font-size:7.35px;line-height:7.35px;color:#474b4d;font-weight:400;">Lorem ipsum dolour</div><div class="b" style="left:380.80px;top:98.20px;width:110.40px;height:103.30px;background:#f1f0ed;"></div><div class="t" style="left:392.80px;top:114.95px;font-size:10.1px;line-height:10.1px;color:#3f3f3f;font-weight:700;">Features :</div><div class="b" style="left:393.80px;top:137.60px;width:2.20px;height:2.20px;border-radius:50%;background:#555;"></div><div class="t" style="left:401.10px;top:134.98px;font-size:7.35px;line-height:7.35px;color:#474b4d;font-weight:400;">Lorem ipsum dolour</div><div class="b" style="left:393.80px;top:147.60px;width:2.20px;height:2.20px;border-radius:50%;background:#555;"></div><div class="t" style="left:401.10px;top:144.98px;font-size:7.35px;line-height:7.35px;color:#474b4d;font-weight:400;">sit amet, adipiscing elit,</div><div class="t" style="left:401.10px;top:153.98px;font-size:7.35px;line-height:7.35px;color:#474b4d;font-weight:400;">sed do Ut labore</div><div class="b" style="left:393.80px;top:166.10px;width:2.20px;height:2.20px;border-radius:50%;background:#555;"></div><div class="t" style="left:401.10px;top:163.48px;font-size:7.35px;line-height:7.35px;color:#474b4d;font-weight:400;">et dolore magna.</div><div class="b" style="left:393.80px;top:175.40px;width:2.20px;height:2.20px;border-radius:50%;background:#555;"></div><div class="t" style="left:401.10px;top:172.78px;font-size:7.35px;line-height:7.35px;color:#474b4d;font-weight:400;">Lorem ipsum dolour</div><div class="b" style="left:501.40px;top:98.20px;width:110.40px;height:103.30px;background:#f1f0ed;"></div><div class="t" style="left:513.40px;top:114.95px;font-size:10.1px;line-height:10.1px;color:#3f3f3f;font-weight:700;">Features :</div><div class="b" style="left:514.40px;top:137.60px;width:2.20px;height:2.20px;border-radius:50%;background:#555;"></div><div class="t" style="left:521.70px;top:134.98px;font-size:7.35px;line-height:7.35px;color:#474b4d;font-weight:400;">Lorem ipsum dolour</div><div class="b" style="left:514.40px;top:147.60px;width:2.20px;height:2.20px;border-radius:50%;background:#555;"></div><div class="t" style="left:521.70px;top:144.98px;font-size:7.35px;line-height:7.35px;color:#474b4d;font-weight:400;">sit amet, adipiscing elit,</div><div class="t" style="left:521.70px;top:153.98px;font-size:7.35px;line-height:7.35px;color:#474b4d;font-weight:400;">sed do Ut labore</div><div class="b" style="left:514.40px;top:166.10px;width:2.20px;height:2.20px;border-radius:50%;background:#555;"></div><div class="t" style="left:521.70px;top:163.48px;font-size:7.35px;line-height:7.35px;color:#474b4d;font-weight:400;">et dolore magna.</div><div class="b" style="left:514.40px;top:175.40px;width:2.20px;height:2.20px;border-radius:50%;background:#555;"></div><div class="t" style="left:521.70px;top:172.78px;font-size:7.35px;line-height:7.35px;color:#474b4d;font-weight:400;">Lorem ipsum dolour</div><div class="b" style="left:73.00px;top:201.50px;width:1.00px;height:29.00px;background:repeating-linear-gradient(to bottom,#cfcfcf 0 1px,transparent 1px 3px);"></div><div class="b" style="left:73.00px;top:256.50px;width:1.00px;height:28.00px;background:repeating-linear-gradient(to bottom,#cfcfcf 0 1px,transparent 1px 3px);"></div><div class="b" style="left:113.21px;top:256.50px;width:1.00px;height:28.00px;background:repeating-linear-gradient(to bottom,#cfcfcf 0 1px,transparent 1px 3px);"></div><div class="b" style="left:153.42px;top:256.50px;width:1.00px;height:28.00px;background:repeating-linear-gradient(to bottom,#cfcfcf 0 1px,transparent 1px 3px);"></div><div class="b" style="left:193.63px;top:201.50px;width:1.00px;height:29.00px;background:repeating-linear-gradient(to bottom,#cfcfcf 0 1px,transparent 1px 3px);"></div><div class="b" style="left:193.63px;top:256.50px;width:1.00px;height:28.00px;background:repeating-linear-gradient(to bottom,#cfcfcf 0 1px,transparent 1px 3px);"></div><div class="b" style="left:233.84px;top:256.50px;width:1.00px;height:28.00px;background:repeating-linear-gradient(to bottom,#cfcfcf 0 1px,transparent 1px 3px);"></div><div class="b" style="left:274.05px;top:256.50px;width:1.00px;height:28.00px;background:repeating-linear-gradient(to bottom,#cfcfcf 0 1px,transparent 1px 3px);"></div><div class="b" style="left:314.26px;top:201.50px;width:1.00px;height:29.00px;background:repeating-linear-gradient(to bottom,#cfcfcf 0 1px,transparent 1px 3px);"></div><div class="b" style="left:314.26px;top:256.50px;width:1.00px;height:28.00px;background:repeating-linear-gradient(to bottom,#cfcfcf 0 1px,transparent 1px 3px);"></div><div class="b" style="left:354.47px;top:256.50px;width:1.00px;height:28.00px;background:repeating-linear-gradient(to bottom,#cfcfcf 0 1px,transparent 1px 3px);"></div><div class="b" style="left:394.68px;top:256.50px;width:1.00px;height:28.00px;background:repeating-linear-gradient(to bottom,#cfcfcf 0 1px,transparent 1px 3px);"></div><div class="b" style="left:434.89px;top:201.50px;width:1.00px;height:29.00px;background:repeating-linear-gradient(to bottom,#cfcfcf 0 1px,transparent 1px 3px);"></div><div class="b" style="left:434.89px;top:256.50px;width:1.00px;height:28.00px;background:repeating-linear-gradient(to bottom,#cfcfcf 0 1px,transparent 1px 3px);"></div><div class="b" style="left:475.10px;top:256.50px;width:1.00px;height:28.00px;background:repeating-linear-gradient(to bottom,#cfcfcf 0 1px,transparent 1px 3px);"></div><div class="b" style="left:515.31px;top:256.50px;width:1.00px;height:28.00px;background:repeating-linear-gradient(to bottom,#cfcfcf 0 1px,transparent 1px 3px);"></div><div class="b" style="left:555.52px;top:201.50px;width:1.00px;height:29.00px;background:repeating-linear-gradient(to bottom,#cfcfcf 0 1px,transparent 1px 3px);"></div><div class="b" style="left:555.52px;top:256.50px;width:1.00px;height:28.00px;background:repeating-linear-gradient(to bottom,#cfcfcf 0 1px,transparent 1px 3px);"></div><div class="b" style="left:73.50px;top:285.50px;width:482.52px;height:1.00px;background:repeating-linear-gradient(to right,#e2e2e2 0 2px,transparent 2px 3px);"></div><div class="b" style="left:60.20px;top:230.50px;width:26.60px;height:26.50px;background:#f0f8fa;"></div><div class="t" style="left:-126.50px;width:400px;text-align:center;top:239.19px;font-size:11px;line-height:11px;color:#2b2b2b;font-weight:700;">00</div><div class="b" style="left:68.50px;top:281.00px;width:10.00px;height:10.00px;border-radius:50%;background:radial-gradient(circle at 65% 32%,#66b9dc 0%,#3c92c2 40%,#2a67a2 100%);"></div><div class="t" style="left:-126.50px;width:400px;text-align:center;top:303.97px;font-size:8.3px;line-height:8.3px;color:#505050;font-weight:400;">Dec</div><div class="t" style="left:-126.50px;width:400px;text-align:center;top:320.63px;font-size:11.3px;line-height:11.3px;color:#262626;font-weight:700;">Start</div><div class="b" style="left:100.41px;top:230.50px;width:26.60px;height:26.50px;background:#f0f8fa;"></div><div class="t" style="left:-86.29px;width:400px;text-align:center;top:239.19px;font-size:11px;line-height:11px;color:#2b2b2b;font-weight:700;">01</div><div class="b" style="left:110.91px;top:283.20px;width:5.60px;height:5.60px;border-radius:50%;background:radial-gradient(circle at 65% 32%,#66b9dc 0%,#3c92c2 40%,#2a67a2 100%);"></div><div class="t" style="left:-86.29px;width:400px;text-align:center;top:303.97px;font-size:8.3px;line-height:8.3px;color:#505050;font-weight:400;">Jan</div><div class="b" style="left:140.62px;top:230.50px;width:26.60px;height:26.50px;background:#f0f8fa;"></div><div class="t" style="left:-46.08px;width:400px;text-align:center;top:239.19px;font-size:11px;line-height:11px;color:#2b2b2b;font-weight:700;">02</div><div class="b" style="left:151.12px;top:283.20px;width:5.60px;height:5.60px;border-radius:50%;background:radial-gradient(circle at 65% 32%,#66b9dc 0%,#3c92c2 40%,#2a67a2 100%);"></div><div class="t" style="left:-46.08px;width:400px;text-align:center;top:303.97px;font-size:8.3px;line-height:8.3px;color:#505050;font-weight:400;">Feb</div><div class="b" style="left:180.83px;top:230.50px;width:26.60px;height:26.50px;background:#f0f8fa;"></div><div class="t" style="left:-5.87px;width:400px;text-align:center;top:239.19px;font-size:11px;line-height:11px;color:#2b2b2b;font-weight:700;">03</div><div class="b" style="left:189.13px;top:281.00px;width:10.00px;height:10.00px;border-radius:50%;background:radial-gradient(circle at 65% 32%,#66b9dc 0%,#3c92c2 40%,#2a67a2 100%);"></div><div class="t" style="left:-5.87px;width:400px;text-align:center;top:303.97px;font-size:8.3px;line-height:8.3px;color:#505050;font-weight:400;">Mar</div><div class="t" style="left:-5.87px;width:400px;text-align:center;top:320.63px;font-size:11.3px;line-height:11.3px;color:#262626;font-weight:700;">Q1</div><div class="b" style="left:221.04px;top:230.50px;width:26.60px;height:26.50px;background:#f1f0ed;"></div><div class="t" style="left:34.34px;width:400px;text-align:center;top:239.19px;font-size:11px;line-height:11px;color:#2b2b2b;font-weight:700;">04</div><div class="b" style="left:231.54px;top:283.20px;width:5.60px;height:5.60px;border-radius:50%;background:radial-gradient(circle at 65% 32%,#66b9dc 0%,#3c92c2 40%,#2a67a2 100%);"></div><div class="t" style="left:34.34px;width:400px;text-align:center;top:303.97px;font-size:8.3px;line-height:8.3px;color:#505050;font-weight:400;">Apr</div><div class="b" style="left:261.25px;top:230.50px;width:26.60px;height:26.50px;background:#f1f0ed;"></div><div class="t" style="left:74.55px;width:400px;text-align:center;top:239.19px;font-size:11px;line-height:11px;color:#2b2b2b;font-weight:700;">05</div><div class="b" style="left:271.75px;top:283.20px;width:5.60px;height:5.60px;border-radius:50%;background:radial-gradient(circle at 65% 32%,#66b9dc 0%,#3c92c2 40%,#2a67a2 100%);"></div><div class="t" style="left:74.55px;width:400px;text-align:center;top:303.97px;font-size:8.3px;line-height:8.3px;color:#505050;font-weight:400;">May</div><div class="b" style="left:301.46px;top:230.50px;width:26.60px;height:26.50px;background:#f1f0ed;"></div><div class="t" style="left:114.76px;width:400px;text-align:center;top:239.19px;font-size:11px;line-height:11px;color:#2b2b2b;font-weight:700;">06</div><div class="b" style="left:309.76px;top:281.00px;width:10.00px;height:10.00px;border-radius:50%;background:radial-gradient(circle at 65% 32%,#66b9dc 0%,#3c92c2 40%,#2a67a2 100%);"></div><div class="t" style="left:114.76px;width:400px;text-align:center;top:303.97px;font-size:8.3px;line-height:8.3px;color:#505050;font-weight:400;">Jun</div><div class="t" style="left:114.76px;width:400px;text-align:center;top:320.63px;font-size:11.3px;line-height:11.3px;color:#262626;font-weight:700;">Q2</div><div class="b" style="left:341.67px;top:230.50px;width:26.60px;height:26.50px;background:#f1f0ed;"></div><div class="t" style="left:154.97px;width:400px;text-align:center;top:239.19px;font-size:11px;line-height:11px;color:#2b2b2b;font-weight:700;">07</div><div class="b" style="left:352.17px;top:283.20px;width:5.60px;height:5.60px;border-radius:50%;background:radial-gradient(circle at 65% 32%,#66b9dc 0%,#3c92c2 40%,#2a67a2 100%);"></div><div class="t" style="left:154.97px;width:400px;text-align:center;top:303.97px;font-size:8.3px;line-height:8.3px;color:#505050;font-weight:400;">Jul</div><div class="b" style="left:381.88px;top:230.50px;width:26.60px;height:26.50px;background:#f1f0ed;"></div><div class="t" style="left:195.18px;width:400px;text-align:center;top:239.19px;font-size:11px;line-height:11px;color:#2b2b2b;font-weight:700;">08</div><div class="b" style="left:392.38px;top:283.20px;width:5.60px;height:5.60px;border-radius:50%;background:radial-gradient(circle at 65% 32%,#66b9dc 0%,#3c92c2 40%,#2a67a2 100%);"></div><div class="t" style="left:195.18px;width:400px;text-align:center;top:303.97px;font-size:8.3px;line-height:8.3px;color:#505050;font-weight:400;">Aug</div><div class="b" style="left:422.09px;top:230.50px;width:26.60px;height:26.50px;background:#f1f0ed;"></div><div class="t" style="left:235.39px;width:400px;text-align:center;top:239.19px;font-size:11px;line-height:11px;color:#2b2b2b;font-weight:700;">09</div><div class="b" style="left:430.39px;top:281.00px;width:10.00px;height:10.00px;border-radius:50%;background:radial-gradient(circle at 65% 32%,#66b9dc 0%,#3c92c2 40%,#2a67a2 100%);"></div><div class="t" style="left:235.39px;width:400px;text-align:center;top:303.97px;font-size:8.3px;line-height:8.3px;color:#505050;font-weight:400;">Sep</div><div class="t" style="left:235.39px;width:400px;text-align:center;top:320.63px;font-size:11.3px;line-height:11.3px;color:#262626;font-weight:700;">Q3</div><div class="b" style="left:462.30px;top:230.50px;width:26.60px;height:26.50px;background:#f1f0ed;"></div><div class="t" style="left:275.60px;width:400px;text-align:center;top:239.19px;font-size:11px;line-height:11px;color:#2b2b2b;font-weight:700;">10</div><div class="b" style="left:472.80px;top:283.20px;width:5.60px;height:5.60px;border-radius:50%;background:radial-gradient(circle at 65% 32%,#66b9dc 0%,#3c92c2 40%,#2a67a2 100%);"></div><div class="t" style="left:275.60px;width:400px;text-align:center;top:303.97px;font-size:8.3px;line-height:8.3px;color:#505050;font-weight:400;">Oct</div><div class="b" style="left:502.51px;top:230.50px;width:26.60px;height:26.50px;background:#f1f0ed;"></div><div class="t" style="left:315.81px;width:400px;text-align:center;top:239.19px;font-size:11px;line-height:11px;color:#2b2b2b;font-weight:700;">11</div><div class="b" style="left:513.01px;top:283.20px;width:5.60px;height:5.60px;border-radius:50%;background:radial-gradient(circle at 65% 32%,#66b9dc 0%,#3c92c2 40%,#2a67a2 100%);"></div><div class="t" style="left:315.81px;width:400px;text-align:center;top:303.97px;font-size:8.3px;line-height:8.3px;color:#505050;font-weight:400;">Nov</div><div class="b" style="left:542.72px;top:230.50px;width:26.60px;height:26.50px;background:#f1f0ed;"></div><div class="t" style="left:356.02px;width:400px;text-align:center;top:239.19px;font-size:11px;line-height:11px;color:#2b2b2b;font-weight:700;">12</div><div class="b" style="left:551.02px;top:281.00px;width:10.00px;height:10.00px;border-radius:50%;background:radial-gradient(circle at 65% 32%,#66b9dc 0%,#3c92c2 40%,#2a67a2 100%);"></div><div class="t" style="left:356.02px;width:400px;text-align:center;top:303.97px;font-size:8.3px;line-height:8.3px;color:#505050;font-weight:400;">Dec</div><div class="t" style="left:356.02px;width:400px;text-align:center;top:320.63px;font-size:11.3px;line-height:11.3px;color:#262626;font-weight:700;">Q4</div></div></div><div class="t" style="left:-185.80px;width:400px;text-align:center;top:233.48px;font-size:9px;line-height:9px;color:#333537;font-weight:400;">3</div><div class="b" style="left:24.00px;top:230.00px;width:102.50px;height:59.20px;border:1px solid #dadce0;border-radius:8px;box-sizing:border-box;background:#fbfbfb;"></div><div class="b" style="left:26.3px;top:232.80px;width:98px;height:55.4px;overflow:hidden;border-radius:6px;"><div class="b" style="left:0;top:0;width:634px;height:358px;transform:scale(0.15457);transform-origin:0 0;background:#fbfbfb"><div class="b" style="left:0.00px;top:0.80px;width:634.00px;height:200.40px;background:linear-gradient(90deg,#2e5092 0%,#3a6ea7 25%,#4491ba 50%,#4dabc5 70%,#55b9cb 85%,#57bccc 100%);"></div><div class="t" style="left:-118.50px;width:400px;text-align:center;top:33.91px;font-size:10.5px;line-height:10.5px;color:#fff;font-weight:400;">Company</div><div class="t" style="left:-118.40px;width:400px;text-align:center;top:49.40px;font-size:13px;line-height:13px;color:#fff;font-weight:700;">LOGO</div><div class="t" style="left:116.50px;width:400px;text-align:center;top:29.58px;font-size:21.4px;line-height:21.4px;color:#fff;font-weight:700;">Production Roadmap Title</div><div class="t" style="left:116.70px;width:400px;text-align:center;top:59.81px;font-size:11.8px;line-height:11.8px;color:#fff;font-weight:400;">Roadmap Tagline</div><div class="t" style="left:353.80px;width:400px;text-align:center;top:37.25px;font-size:23.8px;line-height:23.8px;color:#fff;font-weight:700;">2026</div><div class="b" style="left:9.00px;top:81.00px;width:615.00px;height:264.00px;background:#fafbfb;border-radius:12px;box-shadow:0 2px 3px rgba(0,0,0,0.13);"></div><div class="b" style="left:20.00px;top:98.20px;width:110.40px;height:103.30px;background:#f0f8fa;"></div><div class="t" style="left:32.00px;top:114.95px;font-size:10.1px;line-height:10.1px;color:#3d8db0;font-weight:700;">Features :</div><div class="b" style="left:33.00px;top:137.60px;width:2.20px;height:2.20px;border-radius:50%;background:#4aa0c0;"></div><div class="t" style="left:40.30px;top:134.98px;font-size:7.35px;line-height:7.35px;color:#474b4d;font-weight:400;">Lorem ipsum dolour</div><div class="b" style="left:33.00px;top:147.60px;width:2.20px;height:2.20px;border-radius:50%;background:#4aa0c0;"></div><div class="t" style="left:40.30px;top:144.98px;font-size:7.35px;line-height:7.35px;color:#474b4d;font-weight:400;">sit amet, adipiscing elit,</div><div class="t" style="left:40.30px;top:153.98px;font-size:7.35px;line-height:7.35px;color:#474b4d;font-weight:400;">sed do Ut labore</div><div class="b" style="left:33.00px;top:166.10px;width:2.20px;height:2.20px;border-radius:50%;background:#4aa0c0;"></div><div class="t" style="left:40.30px;top:163.48px;font-size:7.35px;line-height:7.35px;color:#474b4d;font-weight:400;">et dolore magna.</div><div class="b" style="left:33.00px;top:175.40px;width:2.20px;height:2.20px;border-radius:50%;background:#4aa0c0;"></div><div class="t" style="left:40.30px;top:172.78px;font-size:7.35px;line-height:7.35px;color:#474b4d;font-weight:400;">Lorem ipsum dolour</div><div class="b" style="left:139.80px;top:98.20px;width:110.40px;height:103.30px;background:#f0f8fa;"></div><div class="t" style="left:151.80px;top:114.95px;font-size:10.1px;line-height:10.1px;color:#3d8db0;font-weight:700;">Features :</div><div class="b" style="left:152.80px;top:137.60px;width:2.20px;height:2.20px;border-radius:50%;background:#4aa0c0;"></div><div class="t" style="left:160.10px;top:134.98px;font-size:7.35px;line-height:7.35px;color:#474b4d;font-weight:400;">Lorem ipsum dolour</div><div class="b" style="left:152.80px;top:147.60px;width:2.20px;height:2.20px;border-radius:50%;background:#4aa0c0;"></div><div class="t" style="left:160.10px;top:144.98px;font-size:7.35px;line-height:7.35px;color:#474b4d;font-weight:400;">sit amet, adipiscing elit,</div><div class="t" style="left:160.10px;top:153.98px;font-size:7.35px;line-height:7.35px;color:#474b4d;font-weight:400;">sed do Ut labore</div><div class="b" style="left:152.80px;top:166.10px;width:2.20px;height:2.20px;border-radius:50%;background:#4aa0c0;"></div><div class="t" style="left:160.10px;top:163.48px;font-size:7.35px;line-height:7.35px;color:#474b4d;font-weight:400;">et dolore magna.</div><div class="b" style="left:152.80px;top:175.40px;width:2.20px;height:2.20px;border-radius:50%;background:#4aa0c0;"></div><div class="t" style="left:160.10px;top:172.78px;font-size:7.35px;line-height:7.35px;color:#474b4d;font-weight:400;">Lorem ipsum dolour</div><div class="b" style="left:260.30px;top:98.20px;width:110.40px;height:103.30px;background:#f0f8fa;"></div><div class="t" style="left:272.30px;top:114.95px;font-size:10.1px;line-height:10.1px;color:#3d8db0;font-weight:700;">Features :</div><div class="b" style="left:273.30px;top:137.60px;width:2.20px;height:2.20px;border-radius:50%;background:#4aa0c0;"></div><div class="t" style="left:280.60px;top:134.98px;font-size:7.35px;line-height:7.35px;color:#474b4d;font-weight:400;">Lorem ipsum dolour</div><div class="b" style="left:273.30px;top:147.60px;width:2.20px;height:2.20px;border-radius:50%;background:#4aa0c0;"></div><div class="t" style="left:280.60px;top:144.98px;font-size:7.35px;line-height:7.35px;color:#474b4d;font-weight:400;">sit amet, adipiscing elit,</div><div class="t" style="left:280.60px;top:153.98px;font-size:7.35px;line-height:7.35px;color:#474b4d;font-weight:400;">sed do Ut labore</div><div class="b" style="left:273.30px;top:166.10px;width:2.20px;height:2.20px;border-radius:50%;background:#4aa0c0;"></div><div class="t" style="left:280.60px;top:163.48px;font-size:7.35px;line-height:7.35px;color:#474b4d;font-weight:400;">et dolore magna.</div><div class="b" style="left:273.30px;top:175.40px;width:2.20px;height:2.20px;border-radius:50%;background:#4aa0c0;"></div><div class="t" style="left:280.60px;top:172.78px;font-size:7.35px;line-height:7.35px;color:#474b4d;font-weight:400;">Lorem ipsum dolour</div><div class="b" style="left:380.80px;top:98.20px;width:110.40px;height:103.30px;background:#f1f0ed;"></div><div class="t" style="left:392.80px;top:114.95px;font-size:10.1px;line-height:10.1px;color:#3f3f3f;font-weight:700;">Features :</div><div class="b" style="left:393.80px;top:137.60px;width:2.20px;height:2.20px;border-radius:50%;background:#555;"></div><div class="t" style="left:401.10px;top:134.98px;font-size:7.35px;line-height:7.35px;color:#474b4d;font-weight:400;">Lorem ipsum dolour</div><div class="b" style="left:393.80px;top:147.60px;width:2.20px;height:2.20px;border-radius:50%;background:#555;"></div><div class="t" style="left:401.10px;top:144.98px;font-size:7.35px;line-height:7.35px;color:#474b4d;font-weight:400;">sit amet, adipiscing elit,</div><div class="t" style="left:401.10px;top:153.98px;font-size:7.35px;line-height:7.35px;color:#474b4d;font-weight:400;">sed do Ut labore</div><div class="b" style="left:393.80px;top:166.10px;width:2.20px;height:2.20px;border-radius:50%;background:#555;"></div><div class="t" style="left:401.10px;top:163.48px;font-size:7.35px;line-height:7.35px;color:#474b4d;font-weight:400;">et dolore magna.</div><div class="b" style="left:393.80px;top:175.40px;width:2.20px;height:2.20px;border-radius:50%;background:#555;"></div><div class="t" style="left:401.10px;top:172.78px;font-size:7.35px;line-height:7.35px;color:#474b4d;font-weight:400;">Lorem ipsum dolour</div><div class="b" style="left:501.40px;top:98.20px;width:110.40px;height:103.30px;background:#f1f0ed;"></div><div class="t" style="left:513.40px;top:114.95px;font-size:10.1px;line-height:10.1px;color:#3f3f3f;font-weight:700;">Features :</div><div class="b" style="left:514.40px;top:137.60px;width:2.20px;height:2.20px;border-radius:50%;background:#555;"></div><div class="t" style="left:521.70px;top:134.98px;font-size:7.35px;line-height:7.35px;color:#474b4d;font-weight:400;">Lorem ipsum dolour</div><div class="b" style="left:514.40px;top:147.60px;width:2.20px;height:2.20px;border-radius:50%;background:#555;"></div><div class="t" style="left:521.70px;top:144.98px;font-size:7.35px;line-height:7.35px;color:#474b4d;font-weight:400;">sit amet, adipiscing elit,</div><div class="t" style="left:521.70px;top:153.98px;font-size:7.35px;line-height:7.35px;color:#474b4d;font-weight:400;">sed do Ut labore</div><div class="b" style="left:514.40px;top:166.10px;width:2.20px;height:2.20px;border-radius:50%;background:#555;"></div><div class="t" style="left:521.70px;top:163.48px;font-size:7.35px;line-height:7.35px;color:#474b4d;font-weight:400;">et dolore magna.</div><div class="b" style="left:514.40px;top:175.40px;width:2.20px;height:2.20px;border-radius:50%;background:#555;"></div><div class="t" style="left:521.70px;top:172.78px;font-size:7.35px;line-height:7.35px;color:#474b4d;font-weight:400;">Lorem ipsum dolour</div><div class="b" style="left:73.00px;top:201.50px;width:1.00px;height:29.00px;background:repeating-linear-gradient(to bottom,#cfcfcf 0 1px,transparent 1px 3px);"></div><div class="b" style="left:73.00px;top:256.50px;width:1.00px;height:28.00px;background:repeating-linear-gradient(to bottom,#cfcfcf 0 1px,transparent 1px 3px);"></div><div class="b" style="left:113.21px;top:256.50px;width:1.00px;height:28.00px;background:repeating-linear-gradient(to bottom,#cfcfcf 0 1px,transparent 1px 3px);"></div><div class="b" style="left:153.42px;top:256.50px;width:1.00px;height:28.00px;background:repeating-linear-gradient(to bottom,#cfcfcf 0 1px,transparent 1px 3px);"></div><div class="b" style="left:193.63px;top:201.50px;width:1.00px;height:29.00px;background:repeating-linear-gradient(to bottom,#cfcfcf 0 1px,transparent 1px 3px);"></div><div class="b" style="left:193.63px;top:256.50px;width:1.00px;height:28.00px;background:repeating-linear-gradient(to bottom,#cfcfcf 0 1px,transparent 1px 3px);"></div><div class="b" style="left:233.84px;top:256.50px;width:1.00px;height:28.00px;background:repeating-linear-gradient(to bottom,#cfcfcf 0 1px,transparent 1px 3px);"></div><div class="b" style="left:274.05px;top:256.50px;width:1.00px;height:28.00px;background:repeating-linear-gradient(to bottom,#cfcfcf 0 1px,transparent 1px 3px);"></div><div class="b" style="left:314.26px;top:201.50px;width:1.00px;height:29.00px;background:repeating-linear-gradient(to bottom,#cfcfcf 0 1px,transparent 1px 3px);"></div><div class="b" style="left:314.26px;top:256.50px;width:1.00px;height:28.00px;background:repeating-linear-gradient(to bottom,#cfcfcf 0 1px,transparent 1px 3px);"></div><div class="b" style="left:354.47px;top:256.50px;width:1.00px;height:28.00px;background:repeating-linear-gradient(to bottom,#cfcfcf 0 1px,transparent 1px 3px);"></div><div class="b" style="left:394.68px;top:256.50px;width:1.00px;height:28.00px;background:repeating-linear-gradient(to bottom,#cfcfcf 0 1px,transparent 1px 3px);"></div><div class="b" style="left:434.89px;top:201.50px;width:1.00px;height:29.00px;background:repeating-linear-gradient(to bottom,#cfcfcf 0 1px,transparent 1px 3px);"></div><div class="b" style="left:434.89px;top:256.50px;width:1.00px;height:28.00px;background:repeating-linear-gradient(to bottom,#cfcfcf 0 1px,transparent 1px 3px);"></div><div class="b" style="left:475.10px;top:256.50px;width:1.00px;height:28.00px;background:repeating-linear-gradient(to bottom,#cfcfcf 0 1px,transparent 1px 3px);"></div><div class="b" style="left:515.31px;top:256.50px;width:1.00px;height:28.00px;background:repeating-linear-gradient(to bottom,#cfcfcf 0 1px,transparent 1px 3px);"></div><div class="b" style="left:555.52px;top:201.50px;width:1.00px;height:29.00px;background:repeating-linear-gradient(to bottom,#cfcfcf 0 1px,transparent 1px 3px);"></div><div class="b" style="left:555.52px;top:256.50px;width:1.00px;height:28.00px;background:repeating-linear-gradient(to bottom,#cfcfcf 0 1px,transparent 1px 3px);"></div><div class="b" style="left:73.50px;top:285.50px;width:482.52px;height:1.00px;background:repeating-linear-gradient(to right,#e2e2e2 0 2px,transparent 2px 3px);"></div><div class="b" style="left:60.20px;top:230.50px;width:26.60px;height:26.50px;background:#f0f8fa;"></div><div class="t" style="left:-126.50px;width:400px;text-align:center;top:239.19px;font-size:11px;line-height:11px;color:#2b2b2b;font-weight:700;">00</div><div class="b" style="left:68.50px;top:281.00px;width:10.00px;height:10.00px;border-radius:50%;background:radial-gradient(circle at 65% 32%,#66b9dc 0%,#3c92c2 40%,#2a67a2 100%);"></div><div class="t" style="left:-126.50px;width:400px;text-align:center;top:303.97px;font-size:8.3px;line-height:8.3px;color:#505050;font-weight:400;">Dec</div><div class="t" style="left:-126.50px;width:400px;text-align:center;top:320.63px;font-size:11.3px;line-height:11.3px;color:#262626;font-weight:700;">Start</div><div class="b" style="left:100.41px;top:230.50px;width:26.60px;height:26.50px;background:#f0f8fa;"></div><div class="t" style="left:-86.29px;width:400px;text-align:center;top:239.19px;font-size:11px;line-height:11px;color:#2b2b2b;font-weight:700;">01</div><div class="b" style="left:110.91px;top:283.20px;width:5.60px;height:5.60px;border-radius:50%;background:radial-gradient(circle at 65% 32%,#66b9dc 0%,#3c92c2 40%,#2a67a2 100%);"></div><div class="t" style="left:-86.29px;width:400px;text-align:center;top:303.97px;font-size:8.3px;line-height:8.3px;color:#505050;font-weight:400;">Jan</div><div class="b" style="left:140.62px;top:230.50px;width:26.60px;height:26.50px;background:#f0f8fa;"></div><div class="t" style="left:-46.08px;width:400px;text-align:center;top:239.19px;font-size:11px;line-height:11px;color:#2b2b2b;font-weight:700;">02</div><div class="b" style="left:151.12px;top:283.20px;width:5.60px;height:5.60px;border-radius:50%;background:radial-gradient(circle at 65% 32%,#66b9dc 0%,#3c92c2 40%,#2a67a2 100%);"></div><div class="t" style="left:-46.08px;width:400px;text-align:center;top:303.97px;font-size:8.3px;line-height:8.3px;color:#505050;font-weight:400;">Feb</div><div class="b" style="left:180.83px;top:230.50px;width:26.60px;height:26.50px;background:#f0f8fa;"></div><div class="t" style="left:-5.87px;width:400px;text-align:center;top:239.19px;font-size:11px;line-height:11px;color:#2b2b2b;font-weight:700;">03</div><div class="b" style="left:189.13px;top:281.00px;width:10.00px;height:10.00px;border-radius:50%;background:radial-gradient(circle at 65% 32%,#66b9dc 0%,#3c92c2 40%,#2a67a2 100%);"></div><div class="t" style="left:-5.87px;width:400px;text-align:center;top:303.97px;font-size:8.3px;line-height:8.3px;color:#505050;font-weight:400;">Mar</div><div class="t" style="left:-5.87px;width:400px;text-align:center;top:320.63px;font-size:11.3px;line-height:11.3px;color:#262626;font-weight:700;">Q1</div><div class="b" style="left:221.04px;top:230.50px;width:26.60px;height:26.50px;background:#f0f8fa;"></div><div class="t" style="left:34.34px;width:400px;text-align:center;top:239.19px;font-size:11px;line-height:11px;color:#2b2b2b;font-weight:700;">04</div><div class="b" style="left:231.54px;top:283.20px;width:5.60px;height:5.60px;border-radius:50%;background:radial-gradient(circle at 65% 32%,#66b9dc 0%,#3c92c2 40%,#2a67a2 100%);"></div><div class="t" style="left:34.34px;width:400px;text-align:center;top:303.97px;font-size:8.3px;line-height:8.3px;color:#505050;font-weight:400;">Apr</div><div class="b" style="left:261.25px;top:230.50px;width:26.60px;height:26.50px;background:#f0f8fa;"></div><div class="t" style="left:74.55px;width:400px;text-align:center;top:239.19px;font-size:11px;line-height:11px;color:#2b2b2b;font-weight:700;">05</div><div class="b" style="left:271.75px;top:283.20px;width:5.60px;height:5.60px;border-radius:50%;background:radial-gradient(circle at 65% 32%,#66b9dc 0%,#3c92c2 40%,#2a67a2 100%);"></div><div class="t" style="left:74.55px;width:400px;text-align:center;top:303.97px;font-size:8.3px;line-height:8.3px;color:#505050;font-weight:400;">May</div><div class="b" style="left:301.46px;top:230.50px;width:26.60px;height:26.50px;background:#f0f8fa;"></div><div class="t" style="left:114.76px;width:400px;text-align:center;top:239.19px;font-size:11px;line-height:11px;color:#2b2b2b;font-weight:700;">06</div><div class="b" style="left:309.76px;top:281.00px;width:10.00px;height:10.00px;border-radius:50%;background:radial-gradient(circle at 65% 32%,#66b9dc 0%,#3c92c2 40%,#2a67a2 100%);"></div><div class="t" style="left:114.76px;width:400px;text-align:center;top:303.97px;font-size:8.3px;line-height:8.3px;color:#505050;font-weight:400;">Jun</div><div class="t" style="left:114.76px;width:400px;text-align:center;top:320.63px;font-size:11.3px;line-height:11.3px;color:#262626;font-weight:700;">Q2</div><div class="b" style="left:341.67px;top:230.50px;width:26.60px;height:26.50px;background:#f1f0ed;"></div><div class="t" style="left:154.97px;width:400px;text-align:center;top:239.19px;font-size:11px;line-height:11px;color:#2b2b2b;font-weight:700;">07</div><div class="b" style="left:352.17px;top:283.20px;width:5.60px;height:5.60px;border-radius:50%;background:radial-gradient(circle at 65% 32%,#66b9dc 0%,#3c92c2 40%,#2a67a2 100%);"></div><div class="t" style="left:154.97px;width:400px;text-align:center;top:303.97px;font-size:8.3px;line-height:8.3px;color:#505050;font-weight:400;">Jul</div><div class="b" style="left:381.88px;top:230.50px;width:26.60px;height:26.50px;background:#f1f0ed;"></div><div class="t" style="left:195.18px;width:400px;text-align:center;top:239.19px;font-size:11px;line-height:11px;color:#2b2b2b;font-weight:700;">08</div><div class="b" style="left:392.38px;top:283.20px;width:5.60px;height:5.60px;border-radius:50%;background:radial-gradient(circle at 65% 32%,#66b9dc 0%,#3c92c2 40%,#2a67a2 100%);"></div><div class="t" style="left:195.18px;width:400px;text-align:center;top:303.97px;font-size:8.3px;line-height:8.3px;color:#505050;font-weight:400;">Aug</div><div class="b" style="left:422.09px;top:230.50px;width:26.60px;height:26.50px;background:#f1f0ed;"></div><div class="t" style="left:235.39px;width:400px;text-align:center;top:239.19px;font-size:11px;line-height:11px;color:#2b2b2b;font-weight:700;">09</div><div class="b" style="left:430.39px;top:281.00px;width:10.00px;height:10.00px;border-radius:50%;background:radial-gradient(circle at 65% 32%,#66b9dc 0%,#3c92c2 40%,#2a67a2 100%);"></div><div class="t" style="left:235.39px;width:400px;text-align:center;top:303.97px;font-size:8.3px;line-height:8.3px;color:#505050;font-weight:400;">Sep</div><div class="t" style="left:235.39px;width:400px;text-align:center;top:320.63px;font-size:11.3px;line-height:11.3px;color:#262626;font-weight:700;">Q3</div><div class="b" style="left:462.30px;top:230.50px;width:26.60px;height:26.50px;background:#f1f0ed;"></div><div class="t" style="left:275.60px;width:400px;text-align:center;top:239.19px;font-size:11px;line-height:11px;color:#2b2b2b;font-weight:700;">10</div><div class="b" style="left:472.80px;top:283.20px;width:5.60px;height:5.60px;border-radius:50%;background:radial-gradient(circle at 65% 32%,#66b9dc 0%,#3c92c2 40%,#2a67a2 100%);"></div><div class="t" style="left:275.60px;width:400px;text-align:center;top:303.97px;font-size:8.3px;line-height:8.3px;color:#505050;font-weight:400;">Oct</div><div class="b" style="left:502.51px;top:230.50px;width:26.60px;height:26.50px;background:#f1f0ed;"></div><div class="t" style="left:315.81px;width:400px;text-align:center;top:239.19px;font-size:11px;line-height:11px;color:#2b2b2b;font-weight:700;">11</div><div class="b" style="left:513.01px;top:283.20px;width:5.60px;height:5.60px;border-radius:50%;background:radial-gradient(circle at 65% 32%,#66b9dc 0%,#3c92c2 40%,#2a67a2 100%);"></div><div class="t" style="left:315.81px;width:400px;text-align:center;top:303.97px;font-size:8.3px;line-height:8.3px;color:#505050;font-weight:400;">Nov</div><div class="b" style="left:542.72px;top:230.50px;width:26.60px;height:26.50px;background:#f1f0ed;"></div><div class="t" style="left:356.02px;width:400px;text-align:center;top:239.19px;font-size:11px;line-height:11px;color:#2b2b2b;font-weight:700;">12</div><div class="b" style="left:551.02px;top:281.00px;width:10.00px;height:10.00px;border-radius:50%;background:radial-gradient(circle at 65% 32%,#66b9dc 0%,#3c92c2 40%,#2a67a2 100%);"></div><div class="t" style="left:356.02px;width:400px;text-align:center;top:303.97px;font-size:8.3px;line-height:8.3px;color:#505050;font-weight:400;">Dec</div><div class="t" style="left:356.02px;width:400px;text-align:center;top:320.63px;font-size:11.3px;line-height:11.3px;color:#262626;font-weight:700;">Q4</div></div></div><div class="t" style="left:-185.80px;width:400px;text-align:center;top:302.48px;font-size:9px;line-height:9px;color:#333537;font-weight:400;">4</div><div class="b" style="left:24.00px;top:299.00px;width:102.50px;height:59.20px;border:1px solid #dadce0;border-radius:8px;box-sizing:border-box;background:#fbfbfb;"></div><div class="b" style="left:26.3px;top:301.80px;width:98px;height:55.4px;overflow:hidden;border-radius:6px;"><div class="b" style="left:0;top:0;width:634px;height:358px;transform:scale(0.15457);transform-origin:0 0;background:#fbfbfb"><div class="b" style="left:0.00px;top:0.80px;width:634.00px;height:200.40px;background:linear-gradient(90deg,#2e5092 0%,#3a6ea7 25%,#4491ba 50%,#4dabc5 70%,#55b9cb 85%,#57bccc 100%);"></div><div class="t" style="left:-118.50px;width:400px;text-align:center;top:33.91px;font-size:10.5px;line-height:10.5px;color:#fff;font-weight:400;">Company</div><div class="t" style="left:-118.40px;width:400px;text-align:center;top:49.40px;font-size:13px;line-height:13px;color:#fff;font-weight:700;">LOGO</div><div class="t" style="left:116.50px;width:400px;text-align:center;top:29.58px;font-size:21.4px;line-height:21.4px;color:#fff;font-weight:700;">Production Roadmap Template</div><div class="t" style="left:116.70px;width:400px;text-align:center;top:59.81px;font-size:11.8px;line-height:11.8px;color:#fff;font-weight:400;">Roadmap Tagline</div><div class="t" style="left:353.80px;width:400px;text-align:center;top:37.25px;font-size:23.8px;line-height:23.8px;color:#fff;font-weight:700;">2027</div><div class="b" style="left:9.00px;top:81.00px;width:615.00px;height:264.00px;background:#fafbfb;border-radius:12px;box-shadow:0 2px 3px rgba(0,0,0,0.13);"></div><div class="b" style="left:20.00px;top:98.20px;width:110.40px;height:103.30px;background:#f0f8fa;"></div><div class="t" style="left:32.00px;top:114.95px;font-size:10.1px;line-height:10.1px;color:#3d8db0;font-weight:700;">Features :</div><div class="b" style="left:33.00px;top:137.60px;width:2.20px;height:2.20px;border-radius:50%;background:#4aa0c0;"></div><div class="t" style="left:40.30px;top:134.98px;font-size:7.35px;line-height:7.35px;color:#474b4d;font-weight:400;">Lorem ipsum dolour</div><div class="b" style="left:33.00px;top:147.60px;width:2.20px;height:2.20px;border-radius:50%;background:#4aa0c0;"></div><div class="t" style="left:40.30px;top:144.98px;font-size:7.35px;line-height:7.35px;color:#474b4d;font-weight:400;">sit amet, adipiscing elit,</div><div class="t" style="left:40.30px;top:153.98px;font-size:7.35px;line-height:7.35px;color:#474b4d;font-weight:400;">sed do Ut labore</div><div class="b" style="left:33.00px;top:166.10px;width:2.20px;height:2.20px;border-radius:50%;background:#4aa0c0;"></div><div class="t" style="left:40.30px;top:163.48px;font-size:7.35px;line-height:7.35px;color:#474b4d;font-weight:400;">et dolore magna.</div><div class="b" style="left:33.00px;top:175.40px;width:2.20px;height:2.20px;border-radius:50%;background:#4aa0c0;"></div><div class="t" style="left:40.30px;top:172.78px;font-size:7.35px;line-height:7.35px;color:#474b4d;font-weight:400;">Lorem ipsum dolour</div><div class="b" style="left:139.80px;top:98.20px;width:110.40px;height:103.30px;background:#f0f8fa;"></div><div class="t" style="left:151.80px;top:114.95px;font-size:10.1px;line-height:10.1px;color:#3d8db0;font-weight:700;">Features :</div><div class="b" style="left:152.80px;top:137.60px;width:2.20px;height:2.20px;border-radius:50%;background:#4aa0c0;"></div><div class="t" style="left:160.10px;top:134.98px;font-size:7.35px;line-height:7.35px;color:#474b4d;font-weight:400;">Lorem ipsum dolour</div><div class="b" style="left:152.80px;top:147.60px;width:2.20px;height:2.20px;border-radius:50%;background:#4aa0c0;"></div><div class="t" style="left:160.10px;top:144.98px;font-size:7.35px;line-height:7.35px;color:#474b4d;font-weight:400;">sit amet, adipiscing elit,</div><div class="t" style="left:160.10px;top:153.98px;font-size:7.35px;line-height:7.35px;color:#474b4d;font-weight:400;">sed do Ut labore</div><div class="b" style="left:152.80px;top:166.10px;width:2.20px;height:2.20px;border-radius:50%;background:#4aa0c0;"></div><div class="t" style="left:160.10px;top:163.48px;font-size:7.35px;line-height:7.35px;color:#474b4d;font-weight:400;">et dolore magna.</div><div class="b" style="left:152.80px;top:175.40px;width:2.20px;height:2.20px;border-radius:50%;background:#4aa0c0;"></div><div class="t" style="left:160.10px;top:172.78px;font-size:7.35px;line-height:7.35px;color:#474b4d;font-weight:400;">Lorem ipsum dolour</div><div class="b" style="left:260.30px;top:98.20px;width:110.40px;height:103.30px;background:#f0f8fa;"></div><div class="t" style="left:272.30px;top:114.95px;font-size:10.1px;line-height:10.1px;color:#3d8db0;font-weight:700;">Features :</div><div class="b" style="left:273.30px;top:137.60px;width:2.20px;height:2.20px;border-radius:50%;background:#4aa0c0;"></div><div class="t" style="left:280.60px;top:134.98px;font-size:7.35px;line-height:7.35px;color:#474b4d;font-weight:400;">Lorem ipsum dolour</div><div class="b" style="left:273.30px;top:147.60px;width:2.20px;height:2.20px;border-radius:50%;background:#4aa0c0;"></div><div class="t" style="left:280.60px;top:144.98px;font-size:7.35px;line-height:7.35px;color:#474b4d;font-weight:400;">sit amet, adipiscing elit,</div><div class="t" style="left:280.60px;top:153.98px;font-size:7.35px;line-height:7.35px;color:#474b4d;font-weight:400;">sed do Ut labore</div><div class="b" style="left:273.30px;top:166.10px;width:2.20px;height:2.20px;border-radius:50%;background:#4aa0c0;"></div><div class="t" style="left:280.60px;top:163.48px;font-size:7.35px;line-height:7.35px;color:#474b4d;font-weight:400;">et dolore magna.</div><div class="b" style="left:273.30px;top:175.40px;width:2.20px;height:2.20px;border-radius:50%;background:#4aa0c0;"></div><div class="t" style="left:280.60px;top:172.78px;font-size:7.35px;line-height:7.35px;color:#474b4d;font-weight:400;">Lorem ipsum dolour</div><div class="b" style="left:380.80px;top:98.20px;width:110.40px;height:103.30px;background:#f0f8fa;"></div><div class="t" style="left:392.80px;top:114.95px;font-size:10.1px;line-height:10.1px;color:#3d8db0;font-weight:700;">Features :</div><div class="b" style="left:393.80px;top:137.60px;width:2.20px;height:2.20px;border-radius:50%;background:#4aa0c0;"></div><div class="t" style="left:401.10px;top:134.98px;font-size:7.35px;line-height:7.35px;color:#474b4d;font-weight:400;">Lorem ipsum dolour</div><div class="b" style="left:393.80px;top:147.60px;width:2.20px;height:2.20px;border-radius:50%;background:#4aa0c0;"></div><div class="t" style="left:401.10px;top:144.98px;font-size:7.35px;line-height:7.35px;color:#474b4d;font-weight:400;">sit amet, adipiscing elit,</div><div class="t" style="left:401.10px;top:153.98px;font-size:7.35px;line-height:7.35px;color:#474b4d;font-weight:400;">sed do Ut labore</div><div class="b" style="left:393.80px;top:166.10px;width:2.20px;height:2.20px;border-radius:50%;background:#4aa0c0;"></div><div class="t" style="left:401.10px;top:163.48px;font-size:7.35px;line-height:7.35px;color:#474b4d;font-weight:400;">et dolore magna.</div><div class="b" style="left:393.80px;top:175.40px;width:2.20px;height:2.20px;border-radius:50%;background:#4aa0c0;"></div><div class="t" style="left:401.10px;top:172.78px;font-size:7.35px;line-height:7.35px;color:#474b4d;font-weight:400;">Lorem ipsum dolour</div><div class="b" style="left:501.40px;top:98.20px;width:110.40px;height:103.30px;background:#f1f0ed;"></div><div class="t" style="left:513.40px;top:114.95px;font-size:10.1px;line-height:10.1px;color:#3f3f3f;font-weight:700;">Features :</div><div class="b" style="left:514.40px;top:137.60px;width:2.20px;height:2.20px;border-radius:50%;background:#555;"></div><div class="t" style="left:521.70px;top:134.98px;font-size:7.35px;line-height:7.35px;color:#474b4d;font-weight:400;">Lorem ipsum dolour</div><div class="b" style="left:514.40px;top:147.60px;width:2.20px;height:2.20px;border-radius:50%;background:#555;"></div><div class="t" style="left:521.70px;top:144.98px;font-size:7.35px;line-height:7.35px;color:#474b4d;font-weight:400;">sit amet, adipiscing elit,</div><div class="t" style="left:521.70px;top:153.98px;font-size:7.35px;line-height:7.35px;color:#474b4d;font-weight:400;">sed do Ut labore</div><div class="b" style="left:514.40px;top:166.10px;width:2.20px;height:2.20px;border-radius:50%;background:#555;"></div><div class="t" style="left:521.70px;top:163.48px;font-size:7.35px;line-height:7.35px;color:#474b4d;font-weight:400;">et dolore magna.</div><div class="b" style="left:514.40px;top:175.40px;width:2.20px;height:2.20px;border-radius:50%;background:#555;"></div><div class="t" style="left:521.70px;top:172.78px;font-size:7.35px;line-height:7.35px;color:#474b4d;font-weight:400;">Lorem ipsum dolour</div><div class="b" style="left:73.00px;top:201.50px;width:1.00px;height:29.00px;background:repeating-linear-gradient(to bottom,#cfcfcf 0 1px,transparent 1px 3px);"></div><div class="b" style="left:73.00px;top:256.50px;width:1.00px;height:28.00px;background:repeating-linear-gradient(to bottom,#cfcfcf 0 1px,transparent 1px 3px);"></div><div class="b" style="left:113.21px;top:256.50px;width:1.00px;height:28.00px;background:repeating-linear-gradient(to bottom,#cfcfcf 0 1px,transparent 1px 3px);"></div><div class="b" style="left:153.42px;top:256.50px;width:1.00px;height:28.00px;background:repeating-linear-gradient(to bottom,#cfcfcf 0 1px,transparent 1px 3px);"></div><div class="b" style="left:193.63px;top:201.50px;width:1.00px;height:29.00px;background:repeating-linear-gradient(to bottom,#cfcfcf 0 1px,transparent 1px 3px);"></div><div class="b" style="left:193.63px;top:256.50px;width:1.00px;height:28.00px;background:repeating-linear-gradient(to bottom,#cfcfcf 0 1px,transparent 1px 3px);"></div><div class="b" style="left:233.84px;top:256.50px;width:1.00px;height:28.00px;background:repeating-linear-gradient(to bottom,#cfcfcf 0 1px,transparent 1px 3px);"></div><div class="b" style="left:274.05px;top:256.50px;width:1.00px;height:28.00px;background:repeating-linear-gradient(to bottom,#cfcfcf 0 1px,transparent 1px 3px);"></div><div class="b" style="left:314.26px;top:201.50px;width:1.00px;height:29.00px;background:repeating-linear-gradient(to bottom,#cfcfcf 0 1px,transparent 1px 3px);"></div><div class="b" style="left:314.26px;top:256.50px;width:1.00px;height:28.00px;background:repeating-linear-gradient(to bottom,#cfcfcf 0 1px,transparent 1px 3px);"></div><div class="b" style="left:354.47px;top:256.50px;width:1.00px;height:28.00px;background:repeating-linear-gradient(to bottom,#cfcfcf 0 1px,transparent 1px 3px);"></div><div class="b" style="left:394.68px;top:256.50px;width:1.00px;height:28.00px;background:repeating-linear-gradient(to bottom,#cfcfcf 0 1px,transparent 1px 3px);"></div><div class="b" style="left:434.89px;top:201.50px;width:1.00px;height:29.00px;background:repeating-linear-gradient(to bottom,#cfcfcf 0 1px,transparent 1px 3px);"></div><div class="b" style="left:434.89px;top:256.50px;width:1.00px;height:28.00px;background:repeating-linear-gradient(to bottom,#cfcfcf 0 1px,transparent 1px 3px);"></div><div class="b" style="left:475.10px;top:256.50px;width:1.00px;height:28.00px;background:repeating-linear-gradient(to bottom,#cfcfcf 0 1px,transparent 1px 3px);"></div><div class="b" style="left:515.31px;top:256.50px;width:1.00px;height:28.00px;background:repeating-linear-gradient(to bottom,#cfcfcf 0 1px,transparent 1px 3px);"></div><div class="b" style="left:555.52px;top:201.50px;width:1.00px;height:29.00px;background:repeating-linear-gradient(to bottom,#cfcfcf 0 1px,transparent 1px 3px);"></div><div class="b" style="left:555.52px;top:256.50px;width:1.00px;height:28.00px;background:repeating-linear-gradient(to bottom,#cfcfcf 0 1px,transparent 1px 3px);"></div><div class="b" style="left:73.50px;top:285.50px;width:482.52px;height:1.00px;background:repeating-linear-gradient(to right,#e2e2e2 0 2px,transparent 2px 3px);"></div><div class="b" style="left:60.20px;top:230.50px;width:26.60px;height:26.50px;background:#f0f8fa;"></div><div class="t" style="left:-126.50px;width:400px;text-align:center;top:239.19px;font-size:11px;line-height:11px;color:#2b2b2b;font-weight:700;">00</div><div class="b" style="left:68.50px;top:281.00px;width:10.00px;height:10.00px;border-radius:50%;background:radial-gradient(circle at 65% 32%,#66b9dc 0%,#3c92c2 40%,#2a67a2 100%);"></div><div class="t" style="left:-126.50px;width:400px;text-align:center;top:303.97px;font-size:8.3px;line-height:8.3px;color:#505050;font-weight:400;">Dec</div><div class="t" style="left:-126.50px;width:400px;text-align:center;top:320.63px;font-size:11.3px;line-height:11.3px;color:#262626;font-weight:700;">Start</div><div class="b" style="left:100.41px;top:230.50px;width:26.60px;height:26.50px;background:#f0f8fa;"></div><div class="t" style="left:-86.29px;width:400px;text-align:center;top:239.19px;font-size:11px;line-height:11px;color:#2b2b2b;font-weight:700;">01</div><div class="b" style="left:110.91px;top:283.20px;width:5.60px;height:5.60px;border-radius:50%;background:radial-gradient(circle at 65% 32%,#66b9dc 0%,#3c92c2 40%,#2a67a2 100%);"></div><div class="t" style="left:-86.29px;width:400px;text-align:center;top:303.97px;font-size:8.3px;line-height:8.3px;color:#505050;font-weight:400;">Jan</div><div class="b" style="left:140.62px;top:230.50px;width:26.60px;height:26.50px;background:#f0f8fa;"></div><div class="t" style="left:-46.08px;width:400px;text-align:center;top:239.19px;font-size:11px;line-height:11px;color:#2b2b2b;font-weight:700;">02</div><div class="b" style="left:151.12px;top:283.20px;width:5.60px;height:5.60px;border-radius:50%;background:radial-gradient(circle at 65% 32%,#66b9dc 0%,#3c92c2 40%,#2a67a2 100%);"></div><div class="t" style="left:-46.08px;width:400px;text-align:center;top:303.97px;font-size:8.3px;line-height:8.3px;color:#505050;font-weight:400;">Feb</div><div class="b" style="left:180.83px;top:230.50px;width:26.60px;height:26.50px;background:#f0f8fa;"></div><div class="t" style="left:-5.87px;width:400px;text-align:center;top:239.19px;font-size:11px;line-height:11px;color:#2b2b2b;font-weight:700;">03</div><div class="b" style="left:189.13px;top:281.00px;width:10.00px;height:10.00px;border-radius:50%;background:radial-gradient(circle at 65% 32%,#66b9dc 0%,#3c92c2 40%,#2a67a2 100%);"></div><div class="t" style="left:-5.87px;width:400px;text-align:center;top:303.97px;font-size:8.3px;line-height:8.3px;color:#505050;font-weight:400;">Mar</div><div class="t" style="left:-5.87px;width:400px;text-align:center;top:320.63px;font-size:11.3px;line-height:11.3px;color:#262626;font-weight:700;">Q1</div><div class="b" style="left:221.04px;top:230.50px;width:26.60px;height:26.50px;background:#f0f8fa;"></div><div class="t" style="left:34.34px;width:400px;text-align:center;top:239.19px;font-size:11px;line-height:11px;color:#2b2b2b;font-weight:700;">04</div><div class="b" style="left:231.54px;top:283.20px;width:5.60px;height:5.60px;border-radius:50%;background:radial-gradient(circle at 65% 32%,#66b9dc 0%,#3c92c2 40%,#2a67a2 100%);"></div><div class="t" style="left:34.34px;width:400px;text-align:center;top:303.97px;font-size:8.3px;line-height:8.3px;color:#505050;font-weight:400;">Apr</div><div class="b" style="left:261.25px;top:230.50px;width:26.60px;height:26.50px;background:#f0f8fa;"></div><div class="t" style="left:74.55px;width:400px;text-align:center;top:239.19px;font-size:11px;line-height:11px;color:#2b2b2b;font-weight:700;">05</div><div class="b" style="left:271.75px;top:283.20px;width:5.60px;height:5.60px;border-radius:50%;background:radial-gradient(circle at 65% 32%,#66b9dc 0%,#3c92c2 40%,#2a67a2 100%);"></div><div class="t" style="left:74.55px;width:400px;text-align:center;top:303.97px;font-size:8.3px;line-height:8.3px;color:#505050;font-weight:400;">May</div><div class="b" style="left:301.46px;top:230.50px;width:26.60px;height:26.50px;background:#f0f8fa;"></div><div class="t" style="left:114.76px;width:400px;text-align:center;top:239.19px;font-size:11px;line-height:11px;color:#2b2b2b;font-weight:700;">06</div><div class="b" style="left:309.76px;top:281.00px;width:10.00px;height:10.00px;border-radius:50%;background:radial-gradient(circle at 65% 32%,#66b9dc 0%,#3c92c2 40%,#2a67a2 100%);"></div><div class="t" style="left:114.76px;width:400px;text-align:center;top:303.97px;font-size:8.3px;line-height:8.3px;color:#505050;font-weight:400;">Jun</div><div class="t" style="left:114.76px;width:400px;text-align:center;top:320.63px;font-size:11.3px;line-height:11.3px;color:#262626;font-weight:700;">Q2</div><div class="b" style="left:341.67px;top:230.50px;width:26.60px;height:26.50px;background:#f0f8fa;"></div><div class="t" style="left:154.97px;width:400px;text-align:center;top:239.19px;font-size:11px;line-height:11px;color:#2b2b2b;font-weight:700;">07</div><div class="b" style="left:352.17px;top:283.20px;width:5.60px;height:5.60px;border-radius:50%;background:radial-gradient(circle at 65% 32%,#66b9dc 0%,#3c92c2 40%,#2a67a2 100%);"></div><div class="t" style="left:154.97px;width:400px;text-align:center;top:303.97px;font-size:8.3px;line-height:8.3px;color:#505050;font-weight:400;">Jul</div><div class="b" style="left:381.88px;top:230.50px;width:26.60px;height:26.50px;background:#f0f8fa;"></div><div class="t" style="left:195.18px;width:400px;text-align:center;top:239.19px;font-size:11px;line-height:11px;color:#2b2b2b;font-weight:700;">08</div><div class="b" style="left:392.38px;top:283.20px;width:5.60px;height:5.60px;border-radius:50%;background:radial-gradient(circle at 65% 32%,#66b9dc 0%,#3c92c2 40%,#2a67a2 100%);"></div><div class="t" style="left:195.18px;width:400px;text-align:center;top:303.97px;font-size:8.3px;line-height:8.3px;color:#505050;font-weight:400;">Aug</div><div class="b" style="left:422.09px;top:230.50px;width:26.60px;height:26.50px;background:#f0f8fa;"></div><div class="t" style="left:235.39px;width:400px;text-align:center;top:239.19px;font-size:11px;line-height:11px;color:#2b2b2b;font-weight:700;">09</div><div class="b" style="left:430.39px;top:281.00px;width:10.00px;height:10.00px;border-radius:50%;background:radial-gradient(circle at 65% 32%,#66b9dc 0%,#3c92c2 40%,#2a67a2 100%);"></div><div class="t" style="left:235.39px;width:400px;text-align:center;top:303.97px;font-size:8.3px;line-height:8.3px;color:#505050;font-weight:400;">Sep</div><div class="t" style="left:235.39px;width:400px;text-align:center;top:320.63px;font-size:11.3px;line-height:11.3px;color:#262626;font-weight:700;">Q3</div><div class="b" style="left:462.30px;top:230.50px;width:26.60px;height:26.50px;background:#f1f0ed;"></div><div class="t" style="left:275.60px;width:400px;text-align:center;top:239.19px;font-size:11px;line-height:11px;color:#2b2b2b;font-weight:700;">10</div><div class="b" style="left:472.80px;top:283.20px;width:5.60px;height:5.60px;border-radius:50%;background:radial-gradient(circle at 65% 32%,#66b9dc 0%,#3c92c2 40%,#2a67a2 100%);"></div><div class="t" style="left:275.60px;width:400px;text-align:center;top:303.97px;font-size:8.3px;line-height:8.3px;color:#505050;font-weight:400;">Oct</div><div class="b" style="left:502.51px;top:230.50px;width:26.60px;height:26.50px;background:#f1f0ed;"></div><div class="t" style="left:315.81px;width:400px;text-align:center;top:239.19px;font-size:11px;line-height:11px;color:#2b2b2b;font-weight:700;">11</div><div class="b" style="left:513.01px;top:283.20px;width:5.60px;height:5.60px;border-radius:50%;background:radial-gradient(circle at 65% 32%,#66b9dc 0%,#3c92c2 40%,#2a67a2 100%);"></div><div class="t" style="left:315.81px;width:400px;text-align:center;top:303.97px;font-size:8.3px;line-height:8.3px;color:#505050;font-weight:400;">Nov</div><div class="b" style="left:542.72px;top:230.50px;width:26.60px;height:26.50px;background:#f1f0ed;"></div><div class="t" style="left:356.02px;width:400px;text-align:center;top:239.19px;font-size:11px;line-height:11px;color:#2b2b2b;font-weight:700;">12</div><div class="b" style="left:551.02px;top:281.00px;width:10.00px;height:10.00px;border-radius:50%;background:radial-gradient(circle at 65% 32%,#66b9dc 0%,#3c92c2 40%,#2a67a2 100%);"></div><div class="t" style="left:356.02px;width:400px;text-align:center;top:303.97px;font-size:8.3px;line-height:8.3px;color:#505050;font-weight:400;">Dec</div><div class="t" style="left:356.02px;width:400px;text-align:center;top:320.63px;font-size:11.3px;line-height:11.3px;color:#262626;font-weight:700;">Q4</div></div></div><div class="t" style="left:-185.80px;width:400px;text-align:center;top:370.48px;font-size:9px;line-height:9px;color:#333537;font-weight:400;">5</div><div class="b" style="left:24.00px;top:367.00px;width:102.50px;height:59.20px;border:1px solid #dadce0;border-radius:8px;box-sizing:border-box;background:#fbfbfb;"></div><div class="b" style="left:26.3px;top:369.80px;width:98px;height:55.4px;overflow:hidden;border-radius:6px;"><div class="b" style="left:0;top:0;width:634px;height:358px;transform:scale(0.15457);transform-origin:0 0;background:#fbfbfb"><div class="b" style="left:0.00px;top:0.80px;width:634.00px;height:200.40px;background:linear-gradient(90deg,#2e5092 0%,#3a6ea7 25%,#4491ba 50%,#4dabc5 70%,#55b9cb 85%,#57bccc 100%);"></div><div class="t" style="left:-118.50px;width:400px;text-align:center;top:33.91px;font-size:10.5px;line-height:10.5px;color:#fff;font-weight:400;">Company</div><div class="t" style="left:-118.40px;width:400px;text-align:center;top:49.40px;font-size:13px;line-height:13px;color:#fff;font-weight:700;">LOGO</div><div class="t" style="left:116.50px;width:400px;text-align:center;top:29.58px;font-size:21.4px;line-height:21.4px;color:#fff;font-weight:700;">Production Roadmap Template</div><div class="t" style="left:116.70px;width:400px;text-align:center;top:59.81px;font-size:11.8px;line-height:11.8px;color:#fff;font-weight:400;">Roadmap Tagline</div><div class="t" style="left:353.80px;width:400px;text-align:center;top:37.25px;font-size:23.8px;line-height:23.8px;color:#fff;font-weight:700;">2028</div><div class="b" style="left:9.00px;top:81.00px;width:615.00px;height:264.00px;background:#fafbfb;border-radius:12px;box-shadow:0 2px 3px rgba(0,0,0,0.13);"></div><div class="b" style="left:20.00px;top:98.20px;width:110.40px;height:103.30px;background:#f0f8fa;"></div><div class="t" style="left:32.00px;top:114.95px;font-size:10.1px;line-height:10.1px;color:#3d8db0;font-weight:700;">Features :</div><div class="b" style="left:33.00px;top:137.60px;width:2.20px;height:2.20px;border-radius:50%;background:#4aa0c0;"></div><div class="t" style="left:40.30px;top:134.98px;font-size:7.35px;line-height:7.35px;color:#474b4d;font-weight:400;">Lorem ipsum dolour</div><div class="b" style="left:33.00px;top:147.60px;width:2.20px;height:2.20px;border-radius:50%;background:#4aa0c0;"></div><div class="t" style="left:40.30px;top:144.98px;font-size:7.35px;line-height:7.35px;color:#474b4d;font-weight:400;">sit amet, adipiscing elit,</div><div class="t" style="left:40.30px;top:153.98px;font-size:7.35px;line-height:7.35px;color:#474b4d;font-weight:400;">sed do Ut labore</div><div class="b" style="left:33.00px;top:166.10px;width:2.20px;height:2.20px;border-radius:50%;background:#4aa0c0;"></div><div class="t" style="left:40.30px;top:163.48px;font-size:7.35px;line-height:7.35px;color:#474b4d;font-weight:400;">et dolore magna.</div><div class="b" style="left:33.00px;top:175.40px;width:2.20px;height:2.20px;border-radius:50%;background:#4aa0c0;"></div><div class="t" style="left:40.30px;top:172.78px;font-size:7.35px;line-height:7.35px;color:#474b4d;font-weight:400;">Lorem ipsum dolour</div><div class="b" style="left:139.80px;top:98.20px;width:110.40px;height:103.30px;background:#f0f8fa;"></div><div class="t" style="left:151.80px;top:114.95px;font-size:10.1px;line-height:10.1px;color:#3d8db0;font-weight:700;">Features :</div><div class="b" style="left:152.80px;top:137.60px;width:2.20px;height:2.20px;border-radius:50%;background:#4aa0c0;"></div><div class="t" style="left:160.10px;top:134.98px;font-size:7.35px;line-height:7.35px;color:#474b4d;font-weight:400;">Lorem ipsum dolour</div><div class="b" style="left:152.80px;top:147.60px;width:2.20px;height:2.20px;border-radius:50%;background:#4aa0c0;"></div><div class="t" style="left:160.10px;top:144.98px;font-size:7.35px;line-height:7.35px;color:#474b4d;font-weight:400;">sit amet, adipiscing elit,</div><div class="t" style="left:160.10px;top:153.98px;font-size:7.35px;line-height:7.35px;color:#474b4d;font-weight:400;">sed do Ut labore</div><div class="b" style="left:152.80px;top:166.10px;width:2.20px;height:2.20px;border-radius:50%;background:#4aa0c0;"></div><div class="t" style="left:160.10px;top:163.48px;font-size:7.35px;line-height:7.35px;color:#474b4d;font-weight:400;">et dolore magna.</div><div class="b" style="left:152.80px;top:175.40px;width:2.20px;height:2.20px;border-radius:50%;background:#4aa0c0;"></div><div class="t" style="left:160.10px;top:172.78px;font-size:7.35px;line-height:7.35px;color:#474b4d;font-weight:400;">Lorem ipsum dolour</div><div class="b" style="left:260.30px;top:98.20px;width:110.40px;height:103.30px;background:#f0f8fa;"></div><div class="t" style="left:272.30px;top:114.95px;font-size:10.1px;line-height:10.1px;color:#3d8db0;font-weight:700;">Features :</div><div class="b" style="left:273.30px;top:137.60px;width:2.20px;height:2.20px;border-radius:50%;background:#4aa0c0;"></div><div class="t" style="left:280.60px;top:134.98px;font-size:7.35px;line-height:7.35px;color:#474b4d;font-weight:400;">Lorem ipsum dolour</div><div class="b" style="left:273.30px;top:147.60px;width:2.20px;height:2.20px;border-radius:50%;background:#4aa0c0;"></div><div class="t" style="left:280.60px;top:144.98px;font-size:7.35px;line-height:7.35px;color:#474b4d;font-weight:400;">sit amet, adipiscing elit,</div><div class="t" style="left:280.60px;top:153.98px;font-size:7.35px;line-height:7.35px;color:#474b4d;font-weight:400;">sed do Ut labore</div><div class="b" style="left:273.30px;top:166.10px;width:2.20px;height:2.20px;border-radius:50%;background:#4aa0c0;"></div><div class="t" style="left:280.60px;top:163.48px;font-size:7.35px;line-height:7.35px;color:#474b4d;font-weight:400;">et dolore magna.</div><div class="b" style="left:273.30px;top:175.40px;width:2.20px;height:2.20px;border-radius:50%;background:#4aa0c0;"></div><div class="t" style="left:280.60px;top:172.78px;font-size:7.35px;line-height:7.35px;color:#474b4d;font-weight:400;">Lorem ipsum dolour</div><div class="b" style="left:380.80px;top:98.20px;width:110.40px;height:103.30px;background:#f0f8fa;"></div><div class="t" style="left:392.80px;top:114.95px;font-size:10.1px;line-height:10.1px;color:#3d8db0;font-weight:700;">Features :</div><div class="b" style="left:393.80px;top:137.60px;width:2.20px;height:2.20px;border-radius:50%;background:#4aa0c0;"></div><div class="t" style="left:401.10px;top:134.98px;font-size:7.35px;line-height:7.35px;color:#474b4d;font-weight:400;">Lorem ipsum dolour</div><div class="b" style="left:393.80px;top:147.60px;width:2.20px;height:2.20px;border-radius:50%;background:#4aa0c0;"></div><div class="t" style="left:401.10px;top:144.98px;font-size:7.35px;line-height:7.35px;color:#474b4d;font-weight:400;">sit amet, adipiscing elit,</div><div class="t" style="left:401.10px;top:153.98px;font-size:7.35px;line-height:7.35px;color:#474b4d;font-weight:400;">sed do Ut labore</div><div class="b" style="left:393.80px;top:166.10px;width:2.20px;height:2.20px;border-radius:50%;background:#4aa0c0;"></div><div class="t" style="left:401.10px;top:163.48px;font-size:7.35px;line-height:7.35px;color:#474b4d;font-weight:400;">et dolore magna.</div><div class="b" style="left:393.80px;top:175.40px;width:2.20px;height:2.20px;border-radius:50%;background:#4aa0c0;"></div><div class="t" style="left:401.10px;top:172.78px;font-size:7.35px;line-height:7.35px;color:#474b4d;font-weight:400;">Lorem ipsum dolour</div><div class="b" style="left:501.40px;top:98.20px;width:110.40px;height:103.30px;background:#f0f8fa;"></div><div class="t" style="left:513.40px;top:114.95px;font-size:10.1px;line-height:10.1px;color:#3d8db0;font-weight:700;">Features :</div><div class="b" style="left:514.40px;top:137.60px;width:2.20px;height:2.20px;border-radius:50%;background:#4aa0c0;"></div><div class="t" style="left:521.70px;top:134.98px;font-size:7.35px;line-height:7.35px;color:#474b4d;font-weight:400;">Lorem ipsum dolour</div><div class="b" style="left:514.40px;top:147.60px;width:2.20px;height:2.20px;border-radius:50%;background:#4aa0c0;"></div><div class="t" style="left:521.70px;top:144.98px;font-size:7.35px;line-height:7.35px;color:#474b4d;font-weight:400;">sit amet, adipiscing elit,</div><div class="t" style="left:521.70px;top:153.98px;font-size:7.35px;line-height:7.35px;color:#474b4d;font-weight:400;">sed do Ut labore</div><div class="b" style="left:514.40px;top:166.10px;width:2.20px;height:2.20px;border-radius:50%;background:#4aa0c0;"></div><div class="t" style="left:521.70px;top:163.48px;font-size:7.35px;line-height:7.35px;color:#474b4d;font-weight:400;">et dolore magna.</div><div class="b" style="left:514.40px;top:175.40px;width:2.20px;height:2.20px;border-radius:50%;background:#4aa0c0;"></div><div class="t" style="left:521.70px;top:172.78px;font-size:7.35px;line-height:7.35px;color:#474b4d;font-weight:400;">Lorem ipsum dolour</div><div class="b" style="left:73.00px;top:201.50px;width:1.00px;height:29.00px;background:repeating-linear-gradient(to bottom,#cfcfcf 0 1px,transparent 1px 3px);"></div><div class="b" style="left:73.00px;top:256.50px;width:1.00px;height:28.00px;background:repeating-linear-gradient(to bottom,#cfcfcf 0 1px,transparent 1px 3px);"></div><div class="b" style="left:113.21px;top:256.50px;width:1.00px;height:28.00px;background:repeating-linear-gradient(to bottom,#cfcfcf 0 1px,transparent 1px 3px);"></div><div class="b" style="left:153.42px;top:256.50px;width:1.00px;height:28.00px;background:repeating-linear-gradient(to bottom,#cfcfcf 0 1px,transparent 1px 3px);"></div><div class="b" style="left:193.63px;top:201.50px;width:1.00px;height:29.00px;background:repeating-linear-gradient(to bottom,#cfcfcf 0 1px,transparent 1px 3px);"></div><div class="b" style="left:193.63px;top:256.50px;width:1.00px;height:28.00px;background:repeating-linear-gradient(to bottom,#cfcfcf 0 1px,transparent 1px 3px);"></div><div class="b" style="left:233.84px;top:256.50px;width:1.00px;height:28.00px;background:repeating-linear-gradient(to bottom,#cfcfcf 0 1px,transparent 1px 3px);"></div><div class="b" style="left:274.05px;top:256.50px;width:1.00px;height:28.00px;background:repeating-linear-gradient(to bottom,#cfcfcf 0 1px,transparent 1px 3px);"></div><div class="b" style="left:314.26px;top:201.50px;width:1.00px;height:29.00px;background:repeating-linear-gradient(to bottom,#cfcfcf 0 1px,transparent 1px 3px);"></div><div class="b" style="left:314.26px;top:256.50px;width:1.00px;height:28.00px;background:repeating-linear-gradient(to bottom,#cfcfcf 0 1px,transparent 1px 3px);"></div><div class="b" style="left:354.47px;top:256.50px;width:1.00px;height:28.00px;background:repeating-linear-gradient(to bottom,#cfcfcf 0 1px,transparent 1px 3px);"></div><div class="b" style="left:394.68px;top:256.50px;width:1.00px;height:28.00px;background:repeating-linear-gradient(to bottom,#cfcfcf 0 1px,transparent 1px 3px);"></div><div class="b" style="left:434.89px;top:201.50px;width:1.00px;height:29.00px;background:repeating-linear-gradient(to bottom,#cfcfcf 0 1px,transparent 1px 3px);"></div><div class="b" style="left:434.89px;top:256.50px;width:1.00px;height:28.00px;background:repeating-linear-gradient(to bottom,#cfcfcf 0 1px,transparent 1px 3px);"></div><div class="b" style="left:475.10px;top:256.50px;width:1.00px;height:28.00px;background:repeating-linear-gradient(to bottom,#cfcfcf 0 1px,transparent 1px 3px);"></div><div class="b" style="left:515.31px;top:256.50px;width:1.00px;height:28.00px;background:repeating-linear-gradient(to bottom,#cfcfcf 0 1px,transparent 1px 3px);"></div><div class="b" style="left:555.52px;top:201.50px;width:1.00px;height:29.00px;background:repeating-linear-gradient(to bottom,#cfcfcf 0 1px,transparent 1px 3px);"></div><div class="b" style="left:555.52px;top:256.50px;width:1.00px;height:28.00px;background:repeating-linear-gradient(to bottom,#cfcfcf 0 1px,transparent 1px 3px);"></div><div class="b" style="left:73.50px;top:285.50px;width:482.52px;height:1.00px;background:repeating-linear-gradient(to right,#e2e2e2 0 2px,transparent 2px 3px);"></div><div class="b" style="left:60.20px;top:230.50px;width:26.60px;height:26.50px;background:#f0f8fa;"></div><div class="t" style="left:-126.50px;width:400px;text-align:center;top:239.19px;font-size:11px;line-height:11px;color:#2b2b2b;font-weight:700;">00</div><div class="b" style="left:68.50px;top:281.00px;width:10.00px;height:10.00px;border-radius:50%;background:radial-gradient(circle at 65% 32%,#66b9dc 0%,#3c92c2 40%,#2a67a2 100%);"></div><div class="t" style="left:-126.50px;width:400px;text-align:center;top:303.97px;font-size:8.3px;line-height:8.3px;color:#505050;font-weight:400;">Dec</div><div class="t" style="left:-126.50px;width:400px;text-align:center;top:320.63px;font-size:11.3px;line-height:11.3px;color:#262626;font-weight:700;">Start</div><div class="b" style="left:100.41px;top:230.50px;width:26.60px;height:26.50px;background:#f0f8fa;"></div><div class="t" style="left:-86.29px;width:400px;text-align:center;top:239.19px;font-size:11px;line-height:11px;color:#2b2b2b;font-weight:700;">01</div><div class="b" style="left:110.91px;top:283.20px;width:5.60px;height:5.60px;border-radius:50%;background:radial-gradient(circle at 65% 32%,#66b9dc 0%,#3c92c2 40%,#2a67a2 100%);"></div><div class="t" style="left:-86.29px;width:400px;text-align:center;top:303.97px;font-size:8.3px;line-height:8.3px;color:#505050;font-weight:400;">Jan</div><div class="b" style="left:140.62px;top:230.50px;width:26.60px;height:26.50px;background:#f0f8fa;"></div><div class="t" style="left:-46.08px;width:400px;text-align:center;top:239.19px;font-size:11px;line-height:11px;color:#2b2b2b;font-weight:700;">02</div><div class="b" style="left:151.12px;top:283.20px;width:5.60px;height:5.60px;border-radius:50%;background:radial-gradient(circle at 65% 32%,#66b9dc 0%,#3c92c2 40%,#2a67a2 100%);"></div><div class="t" style="left:-46.08px;width:400px;text-align:center;top:303.97px;font-size:8.3px;line-height:8.3px;color:#505050;font-weight:400;">Feb</div><div class="b" style="left:180.83px;top:230.50px;width:26.60px;height:26.50px;background:#f0f8fa;"></div><div class="t" style="left:-5.87px;width:400px;text-align:center;top:239.19px;font-size:11px;line-height:11px;color:#2b2b2b;font-weight:700;">03</div><div class="b" style="left:189.13px;top:281.00px;width:10.00px;height:10.00px;border-radius:50%;background:radial-gradient(circle at 65% 32%,#66b9dc 0%,#3c92c2 40%,#2a67a2 100%);"></div><div class="t" style="left:-5.87px;width:400px;text-align:center;top:303.97px;font-size:8.3px;line-height:8.3px;color:#505050;font-weight:400;">Mar</div><div class="t" style="left:-5.87px;width:400px;text-align:center;top:320.63px;font-size:11.3px;line-height:11.3px;color:#262626;font-weight:700;">Q1</div><div class="b" style="left:221.04px;top:230.50px;width:26.60px;height:26.50px;background:#f0f8fa;"></div><div class="t" style="left:34.34px;width:400px;text-align:center;top:239.19px;font-size:11px;line-height:11px;color:#2b2b2b;font-weight:700;">04</div><div class="b" style="left:231.54px;top:283.20px;width:5.60px;height:5.60px;border-radius:50%;background:radial-gradient(circle at 65% 32%,#66b9dc 0%,#3c92c2 40%,#2a67a2 100%);"></div><div class="t" style="left:34.34px;width:400px;text-align:center;top:303.97px;font-size:8.3px;line-height:8.3px;color:#505050;font-weight:400;">Apr</div><div class="b" style="left:261.25px;top:230.50px;width:26.60px;height:26.50px;background:#f0f8fa;"></div><div class="t" style="left:74.55px;width:400px;text-align:center;top:239.19px;font-size:11px;line-height:11px;color:#2b2b2b;font-weight:700;">05</div><div class="b" style="left:271.75px;top:283.20px;width:5.60px;height:5.60px;border-radius:50%;background:radial-gradient(circle at 65% 32%,#66b9dc 0%,#3c92c2 40%,#2a67a2 100%);"></div><div class="t" style="left:74.55px;width:400px;text-align:center;top:303.97px;font-size:8.3px;line-height:8.3px;color:#505050;font-weight:400;">May</div><div class="b" style="left:301.46px;top:230.50px;width:26.60px;height:26.50px;background:#f0f8fa;"></div><div class="t" style="left:114.76px;width:400px;text-align:center;top:239.19px;font-size:11px;line-height:11px;color:#2b2b2b;font-weight:700;">06</div><div class="b" style="left:309.76px;top:281.00px;width:10.00px;height:10.00px;border-radius:50%;background:radial-gradient(circle at 65% 32%,#66b9dc 0%,#3c92c2 40%,#2a67a2 100%);"></div><div class="t" style="left:114.76px;width:400px;text-align:center;top:303.97px;font-size:8.3px;line-height:8.3px;color:#505050;font-weight:400;">Jun</div><div class="t" style="left:114.76px;width:400px;text-align:center;top:320.63px;font-size:11.3px;line-height:11.3px;color:#262626;font-weight:700;">Q2</div><div class="b" style="left:341.67px;top:230.50px;width:26.60px;height:26.50px;background:#f0f8fa;"></div><div class="t" style="left:154.97px;width:400px;text-align:center;top:239.19px;font-size:11px;line-height:11px;color:#2b2b2b;font-weight:700;">07</div><div class="b" style="left:352.17px;top:283.20px;width:5.60px;height:5.60px;border-radius:50%;background:radial-gradient(circle at 65% 32%,#66b9dc 0%,#3c92c2 40%,#2a67a2 100%);"></div><div class="t" style="left:154.97px;width:400px;text-align:center;top:303.97px;font-size:8.3px;line-height:8.3px;color:#505050;font-weight:400;">Jul</div><div class="b" style="left:381.88px;top:230.50px;width:26.60px;height:26.50px;background:#f0f8fa;"></div><div class="t" style="left:195.18px;width:400px;text-align:center;top:239.19px;font-size:11px;line-height:11px;color:#2b2b2b;font-weight:700;">08</div><div class="b" style="left:392.38px;top:283.20px;width:5.60px;height:5.60px;border-radius:50%;background:radial-gradient(circle at 65% 32%,#66b9dc 0%,#3c92c2 40%,#2a67a2 100%);"></div><div class="t" style="left:195.18px;width:400px;text-align:center;top:303.97px;font-size:8.3px;line-height:8.3px;color:#505050;font-weight:400;">Aug</div><div class="b" style="left:422.09px;top:230.50px;width:26.60px;height:26.50px;background:#f0f8fa;"></div><div class="t" style="left:235.39px;width:400px;text-align:center;top:239.19px;font-size:11px;line-height:11px;color:#2b2b2b;font-weight:700;">09</div><div class="b" style="left:430.39px;top:281.00px;width:10.00px;height:10.00px;border-radius:50%;background:radial-gradient(circle at 65% 32%,#66b9dc 0%,#3c92c2 40%,#2a67a2 100%);"></div><div class="t" style="left:235.39px;width:400px;text-align:center;top:303.97px;font-size:8.3px;line-height:8.3px;color:#505050;font-weight:400;">Sep</div><div class="t" style="left:235.39px;width:400px;text-align:center;top:320.63px;font-size:11.3px;line-height:11.3px;color:#262626;font-weight:700;">Q3</div><div class="b" style="left:462.30px;top:230.50px;width:26.60px;height:26.50px;background:#f0f8fa;"></div><div class="t" style="left:275.60px;width:400px;text-align:center;top:239.19px;font-size:11px;line-height:11px;color:#2b2b2b;font-weight:700;">10</div><div class="b" style="left:472.80px;top:283.20px;width:5.60px;height:5.60px;border-radius:50%;background:radial-gradient(circle at 65% 32%,#66b9dc 0%,#3c92c2 40%,#2a67a2 100%);"></div><div class="t" style="left:275.60px;width:400px;text-align:center;top:303.97px;font-size:8.3px;line-height:8.3px;color:#505050;font-weight:400;">Oct</div><div class="b" style="left:502.51px;top:230.50px;width:26.60px;height:26.50px;background:#f0f8fa;"></div><div class="t" style="left:315.81px;width:400px;text-align:center;top:239.19px;font-size:11px;line-height:11px;color:#2b2b2b;font-weight:700;">11</div><div class="b" style="left:513.01px;top:283.20px;width:5.60px;height:5.60px;border-radius:50%;background:radial-gradient(circle at 65% 32%,#66b9dc 0%,#3c92c2 40%,#2a67a2 100%);"></div><div class="t" style="left:315.81px;width:400px;text-align:center;top:303.97px;font-size:8.3px;line-height:8.3px;color:#505050;font-weight:400;">Nov</div><div class="b" style="left:542.72px;top:230.50px;width:26.60px;height:26.50px;background:#f0f8fa;"></div><div class="t" style="left:356.02px;width:400px;text-align:center;top:239.19px;font-size:11px;line-height:11px;color:#2b2b2b;font-weight:700;">12</div><div class="b" style="left:551.02px;top:281.00px;width:10.00px;height:10.00px;border-radius:50%;background:radial-gradient(circle at 65% 32%,#66b9dc 0%,#3c92c2 40%,#2a67a2 100%);"></div><div class="t" style="left:356.02px;width:400px;text-align:center;top:303.97px;font-size:8.3px;line-height:8.3px;color:#505050;font-weight:400;">Dec</div><div class="t" style="left:356.02px;width:400px;text-align:center;top:320.63px;font-size:11.3px;line-height:11.3px;color:#262626;font-weight:700;">Q4</div></div></div><div class="t" style="left:-185.80px;width:400px;text-align:center;top:439.18px;font-size:9px;line-height:9px;color:#333537;font-weight:400;">6</div><div class="b" style="left:24.00px;top:435.70px;width:102.50px;height:59.20px;border:1px solid #dadce0;border-radius:8px;box-sizing:border-box;background:#fbfbfb;"></div><div class="b" style="left:26.7px;top:437.50px;width:97.5px;height:45px;overflow:hidden;border-radius:6px 6px 0 0;background:#616161;"></div><div class="t" style="left:63.50px;top:462.91px;font-size:5.9px;line-height:5.9px;color:#fff;font-weight:700;">SlideUpLift</div><svg class="b" style="left:55.5px;top:460.20px" width="8" height="10" viewBox="0 0 21 26"><path d="M12.2 2.3 Q3.5 7.5 4 10.5 Q4.6 13 9.2 16.2" fill="none" stroke="#f06a26" stroke-width="5" stroke-linecap="round"/><path d="M9 10.2 Q17.6 14 17.3 16.5 Q16.6 19.5 9.5 23.8" fill="none" stroke="#fff" stroke-width="5" stroke-linecap="round"/></svg></div></div><div class="b" style="left:153.00px;top:91.00px;width:865.00px;height:1.00px;background:#dadce0;"></div><div class="b" style="left:153.00px;top:91.00px;width:1.00px;height:379.50px;background:#dadce0;"></div><div class="b" style="left:153.00px;top:104.80px;width:1.00px;height:355.50px;background:#9a9a9a;"></div><div class="b" style="left:277.00px;top:91.00px;width:633.00px;height:1.00px;background:#8a8a8a;"></div><div class="b" style="left:280.40px;top:88.00px;width:1.00px;height:3.00px;background:#8a8a8a;"></div><div class="b" style="left:285.08px;top:85.50px;width:1.00px;height:5.50px;background:#8a8a8a;"></div><div class="b" style="left:289.76px;top:88.00px;width:1.00px;height:3.00px;background:#8a8a8a;"></div><div class="b" style="left:294.44px;top:85.50px;width:1.00px;height:5.50px;background:#8a8a8a;"></div><div class="b" style="left:299.12px;top:88.00px;width:1.00px;height:3.00px;background:#8a8a8a;"></div><div class="b" style="left:303.80px;top:85.50px;width:1.00px;height:5.50px;background:#8a8a8a;"></div><div class="b" style="left:308.48px;top:88.00px;width:1.00px;height:3.00px;background:#8a8a8a;"></div><div class="b" style="left:313.16px;top:85.50px;width:1.00px;height:5.50px;background:#8a8a8a;"></div><div class="b" style="left:317.84px;top:88.00px;width:1.00px;height:3.00px;background:#8a8a8a;"></div><div class="b" style="left:322.52px;top:85.50px;width:1.00px;height:5.50px;background:#8a8a8a;"></div><div class="b" style="left:327.20px;top:88.00px;width:1.00px;height:3.00px;background:#8a8a8a;"></div><div class="b" style="left:331.88px;top:85.50px;width:1.00px;height:5.50px;background:#8a8a8a;"></div><div class="b" style="left:336.56px;top:88.00px;width:1.00px;height:3.00px;background:#8a8a8a;"></div><div class="b" style="left:341.24px;top:85.50px;width:1.00px;height:5.50px;background:#8a8a8a;"></div><div class="b" style="left:345.92px;top:88.00px;width:1.00px;height:3.00px;background:#8a8a8a;"></div><div class="b" style="left:350.60px;top:85.50px;width:1.00px;height:5.50px;background:#8a8a8a;"></div><div class="b" style="left:355.28px;top:88.00px;width:1.00px;height:3.00px;background:#8a8a8a;"></div><div class="b" style="left:359.96px;top:85.50px;width:1.00px;height:5.50px;background:#8a8a8a;"></div><div class="b" style="left:364.64px;top:88.00px;width:1.00px;height:3.00px;background:#8a8a8a;"></div><div class="b" style="left:369.32px;top:85.50px;width:1.00px;height:5.50px;background:#8a8a8a;"></div><div class="b" style="left:374.00px;top:88.00px;width:1.00px;height:3.00px;background:#8a8a8a;"></div><div class="b" style="left:378.68px;top:85.50px;width:1.00px;height:5.50px;background:#8a8a8a;"></div><div class="b" style="left:383.36px;top:88.00px;width:1.00px;height:3.00px;background:#8a8a8a;"></div><div class="b" style="left:388.04px;top:85.50px;width:1.00px;height:5.50px;background:#8a8a8a;"></div><div class="b" style="left:392.72px;top:88.00px;width:1.00px;height:3.00px;background:#8a8a8a;"></div><div class="b" style="left:397.40px;top:85.50px;width:1.00px;height:5.50px;background:#8a8a8a;"></div><div class="b" style="left:402.08px;top:88.00px;width:1.00px;height:3.00px;background:#8a8a8a;"></div><div class="b" style="left:406.76px;top:85.50px;width:1.00px;height:5.50px;background:#8a8a8a;"></div><div class="b" style="left:411.44px;top:88.00px;width:1.00px;height:3.00px;background:#8a8a8a;"></div><div class="b" style="left:416.12px;top:85.50px;width:1.00px;height:5.50px;background:#8a8a8a;"></div><div class="b" style="left:420.80px;top:88.00px;width:1.00px;height:3.00px;background:#8a8a8a;"></div><div class="b" style="left:425.48px;top:85.50px;width:1.00px;height:5.50px;background:#8a8a8a;"></div><div class="b" style="left:430.16px;top:88.00px;width:1.00px;height:3.00px;background:#8a8a8a;"></div><div class="b" style="left:434.84px;top:85.50px;width:1.00px;height:5.50px;background:#8a8a8a;"></div><div class="b" style="left:439.52px;top:88.00px;width:1.00px;height:3.00px;background:#8a8a8a;"></div><div class="b" style="left:444.20px;top:85.50px;width:1.00px;height:5.50px;background:#8a8a8a;"></div><div class="b" style="left:448.88px;top:88.00px;width:1.00px;height:3.00px;background:#8a8a8a;"></div><div class="b" style="left:453.56px;top:85.50px;width:1.00px;height:5.50px;background:#8a8a8a;"></div><div class="b" style="left:458.24px;top:88.00px;width:1.00px;height:3.00px;background:#8a8a8a;"></div><div class="b" style="left:462.92px;top:85.50px;width:1.00px;height:5.50px;background:#8a8a8a;"></div><div class="b" style="left:467.60px;top:88.00px;width:1.00px;height:3.00px;background:#8a8a8a;"></div><div class="b" style="left:472.28px;top:85.50px;width:1.00px;height:5.50px;background:#8a8a8a;"></div><div class="b" style="left:476.96px;top:88.00px;width:1.00px;height:3.00px;background:#8a8a8a;"></div><div class="b" style="left:481.64px;top:85.50px;width:1.00px;height:5.50px;background:#8a8a8a;"></div><div class="b" style="left:486.32px;top:88.00px;width:1.00px;height:3.00px;background:#8a8a8a;"></div><div class="b" style="left:491.00px;top:85.50px;width:1.00px;height:5.50px;background:#8a8a8a;"></div><div class="b" style="left:495.68px;top:88.00px;width:1.00px;height:3.00px;background:#8a8a8a;"></div><div class="b" style="left:500.36px;top:85.50px;width:1.00px;height:5.50px;background:#8a8a8a;"></div><div class="b" style="left:505.04px;top:88.00px;width:1.00px;height:3.00px;background:#8a8a8a;"></div><div class="b" style="left:509.72px;top:85.50px;width:1.00px;height:5.50px;background:#8a8a8a;"></div><div class="b" style="left:514.40px;top:88.00px;width:1.00px;height:3.00px;background:#8a8a8a;"></div><div class="b" style="left:519.08px;top:85.50px;width:1.00px;height:5.50px;background:#8a8a8a;"></div><div class="b" style="left:523.76px;top:88.00px;width:1.00px;height:3.00px;background:#8a8a8a;"></div><div class="b" style="left:528.44px;top:85.50px;width:1.00px;height:5.50px;background:#8a8a8a;"></div><div class="b" style="left:533.12px;top:88.00px;width:1.00px;height:3.00px;background:#8a8a8a;"></div><div class="b" style="left:537.80px;top:85.50px;width:1.00px;height:5.50px;background:#8a8a8a;"></div><div class="b" style="left:542.48px;top:88.00px;width:1.00px;height:3.00px;background:#8a8a8a;"></div><div class="b" style="left:547.16px;top:85.50px;width:1.00px;height:5.50px;background:#8a8a8a;"></div><div class="b" style="left:551.84px;top:88.00px;width:1.00px;height:3.00px;background:#8a8a8a;"></div><div class="b" style="left:556.52px;top:85.50px;width:1.00px;height:5.50px;background:#8a8a8a;"></div><div class="b" style="left:561.20px;top:88.00px;width:1.00px;height:3.00px;background:#8a8a8a;"></div><div class="b" style="left:565.88px;top:85.50px;width:1.00px;height:5.50px;background:#8a8a8a;"></div><div class="b" style="left:570.56px;top:88.00px;width:1.00px;height:3.00px;background:#8a8a8a;"></div><div class="b" style="left:575.24px;top:85.50px;width:1.00px;height:5.50px;background:#8a8a8a;"></div><div class="b" style="left:579.92px;top:88.00px;width:1.00px;height:3.00px;background:#8a8a8a;"></div><div class="b" style="left:584.60px;top:85.50px;width:1.00px;height:5.50px;background:#8a8a8a;"></div><div class="b" style="left:589.28px;top:88.00px;width:1.00px;height:3.00px;background:#8a8a8a;"></div><div class="b" style="left:593.96px;top:85.50px;width:1.00px;height:5.50px;background:#8a8a8a;"></div><div class="b" style="left:598.64px;top:88.00px;width:1.00px;height:3.00px;background:#8a8a8a;"></div><div class="b" style="left:603.32px;top:85.50px;width:1.00px;height:5.50px;background:#8a8a8a;"></div><div class="b" style="left:608.00px;top:88.00px;width:1.00px;height:3.00px;background:#8a8a8a;"></div><div class="b" style="left:612.68px;top:85.50px;width:1.00px;height:5.50px;background:#8a8a8a;"></div><div class="b" style="left:617.36px;top:88.00px;width:1.00px;height:3.00px;background:#8a8a8a;"></div><div class="b" style="left:622.04px;top:85.50px;width:1.00px;height:5.50px;background:#8a8a8a;"></div><div class="b" style="left:626.72px;top:88.00px;width:1.00px;height:3.00px;background:#8a8a8a;"></div><div class="b" style="left:631.40px;top:85.50px;width:1.00px;height:5.50px;background:#8a8a8a;"></div><div class="b" style="left:636.08px;top:88.00px;width:1.00px;height:3.00px;background:#8a8a8a;"></div><div class="b" style="left:640.76px;top:85.50px;width:1.00px;height:5.50px;background:#8a8a8a;"></div><div class="b" style="left:645.44px;top:88.00px;width:1.00px;height:3.00px;background:#8a8a8a;"></div><div class="b" style="left:650.12px;top:85.50px;width:1.00px;height:5.50px;background:#8a8a8a;"></div><div class="b" style="left:654.80px;top:88.00px;width:1.00px;height:3.00px;background:#8a8a8a;"></div><div class="b" style="left:659.48px;top:85.50px;width:1.00px;height:5.50px;background:#8a8a8a;"></div><div class="b" style="left:664.16px;top:88.00px;width:1.00px;height:3.00px;background:#8a8a8a;"></div><div class="b" style="left:668.84px;top:85.50px;width:1.00px;height:5.50px;background:#8a8a8a;"></div><div class="b" style="left:673.52px;top:88.00px;width:1.00px;height:3.00px;background:#8a8a8a;"></div><div class="b" style="left:678.20px;top:85.50px;width:1.00px;height:5.50px;background:#8a8a8a;"></div><div class="b" style="left:682.88px;top:88.00px;width:1.00px;height:3.00px;background:#8a8a8a;"></div><div class="b" style="left:687.56px;top:85.50px;width:1.00px;height:5.50px;background:#8a8a8a;"></div><div class="b" style="left:692.24px;top:88.00px;width:1.00px;height:3.00px;background:#8a8a8a;"></div><div class="b" style="left:696.92px;top:85.50px;width:1.00px;height:5.50px;background:#8a8a8a;"></div><div class="b" style="left:701.60px;top:88.00px;width:1.00px;height:3.00px;background:#8a8a8a;"></div><div class="b" style="left:706.28px;top:85.50px;width:1.00px;height:5.50px;background:#8a8a8a;"></div><div class="b" style="left:710.96px;top:88.00px;width:1.00px;height:3.00px;background:#8a8a8a;"></div><div class="b" style="left:715.64px;top:85.50px;width:1.00px;height:5.50px;background:#8a8a8a;"></div><div class="b" style="left:720.32px;top:88.00px;width:1.00px;height:3.00px;background:#8a8a8a;"></div><div class="b" style="left:725.00px;top:85.50px;width:1.00px;height:5.50px;background:#8a8a8a;"></div><div class="b" style="left:729.68px;top:88.00px;width:1.00px;height:3.00px;background:#8a8a8a;"></div><div class="b" style="left:734.36px;top:85.50px;width:1.00px;height:5.50px;background:#8a8a8a;"></div><div class="b" style="left:739.04px;top:88.00px;width:1.00px;height:3.00px;background:#8a8a8a;"></div><div class="b" style="left:743.72px;top:85.50px;width:1.00px;height:5.50px;background:#8a8a8a;"></div><div class="b" style="left:748.40px;top:88.00px;width:1.00px;height:3.00px;background:#8a8a8a;"></div><div class="b" style="left:753.08px;top:85.50px;width:1.00px;height:5.50px;background:#8a8a8a;"></div><div class="b" style="left:757.76px;top:88.00px;width:1.00px;height:3.00px;background:#8a8a8a;"></div><div class="b" style="left:762.44px;top:85.50px;width:1.00px;height:5.50px;background:#8a8a8a;"></div><div class="b" style="left:767.12px;top:88.00px;width:1.00px;height:3.00px;background:#8a8a8a;"></div><div class="b" style="left:771.80px;top:85.50px;width:1.00px;height:5.50px;background:#8a8a8a;"></div><div class="b" style="left:776.48px;top:88.00px;width:1.00px;height:3.00px;background:#8a8a8a;"></div><div class="b" style="left:781.16px;top:85.50px;width:1.00px;height:5.50px;background:#8a8a8a;"></div><div class="b" style="left:785.84px;top:88.00px;width:1.00px;height:3.00px;background:#8a8a8a;"></div><div class="b" style="left:790.52px;top:85.50px;width:1.00px;height:5.50px;background:#8a8a8a;"></div><div class="b" style="left:795.20px;top:88.00px;width:1.00px;height:3.00px;background:#8a8a8a;"></div><div class="b" style="left:799.88px;top:85.50px;width:1.00px;height:5.50px;background:#8a8a8a;"></div><div class="b" style="left:804.56px;top:88.00px;width:1.00px;height:3.00px;background:#8a8a8a;"></div><div class="b" style="left:809.24px;top:85.50px;width:1.00px;height:5.50px;background:#8a8a8a;"></div><div class="b" style="left:813.92px;top:88.00px;width:1.00px;height:3.00px;background:#8a8a8a;"></div><div class="b" style="left:818.60px;top:85.50px;width:1.00px;height:5.50px;background:#8a8a8a;"></div><div class="b" style="left:823.28px;top:88.00px;width:1.00px;height:3.00px;background:#8a8a8a;"></div><div class="b" style="left:827.96px;top:85.50px;width:1.00px;height:5.50px;background:#8a8a8a;"></div><div class="b" style="left:832.64px;top:88.00px;width:1.00px;height:3.00px;background:#8a8a8a;"></div><div class="b" style="left:837.32px;top:85.50px;width:1.00px;height:5.50px;background:#8a8a8a;"></div><div class="b" style="left:842.00px;top:88.00px;width:1.00px;height:3.00px;background:#8a8a8a;"></div><div class="b" style="left:846.68px;top:85.50px;width:1.00px;height:5.50px;background:#8a8a8a;"></div><div class="b" style="left:851.36px;top:88.00px;width:1.00px;height:3.00px;background:#8a8a8a;"></div><div class="b" style="left:856.04px;top:85.50px;width:1.00px;height:5.50px;background:#8a8a8a;"></div><div class="b" style="left:860.72px;top:88.00px;width:1.00px;height:3.00px;background:#8a8a8a;"></div><div class="b" style="left:865.40px;top:85.50px;width:1.00px;height:5.50px;background:#8a8a8a;"></div><div class="b" style="left:870.08px;top:88.00px;width:1.00px;height:3.00px;background:#8a8a8a;"></div><div class="b" style="left:874.76px;top:85.50px;width:1.00px;height:5.50px;background:#8a8a8a;"></div><div class="b" style="left:879.44px;top:88.00px;width:1.00px;height:3.00px;background:#8a8a8a;"></div><div class="b" style="left:884.12px;top:85.50px;width:1.00px;height:5.50px;background:#8a8a8a;"></div><div class="b" style="left:888.80px;top:88.00px;width:1.00px;height:3.00px;background:#8a8a8a;"></div><div class="b" style="left:893.48px;top:85.50px;width:1.00px;height:5.50px;background:#8a8a8a;"></div><div class="b" style="left:898.16px;top:88.00px;width:1.00px;height:3.00px;background:#8a8a8a;"></div><div class="b" style="left:902.84px;top:85.50px;width:1.00px;height:5.50px;background:#8a8a8a;"></div><div class="b" style="left:907.52px;top:88.00px;width:1.00px;height:3.00px;background:#8a8a8a;"></div><div class="b" style="left:150.00px;top:108.70px;width:3.00px;height:1.00px;background:#8a8a8a;"></div><div class="b" style="left:147.50px;top:113.38px;width:5.50px;height:1.00px;background:#8a8a8a;"></div><div class="b" style="left:150.00px;top:118.06px;width:3.00px;height:1.00px;background:#8a8a8a;"></div><div class="b" style="left:147.50px;top:122.74px;width:5.50px;height:1.00px;background:#8a8a8a;"></div><div class="b" style="left:150.00px;top:127.42px;width:3.00px;height:1.00px;background:#8a8a8a;"></div><div class="b" style="left:147.50px;top:132.10px;width:5.50px;height:1.00px;background:#8a8a8a;"></div><div class="b" style="left:150.00px;top:136.78px;width:3.00px;height:1.00px;background:#8a8a8a;"></div><div class="b" style="left:147.50px;top:141.46px;width:5.50px;height:1.00px;background:#8a8a8a;"></div><div class="b" style="left:150.00px;top:146.14px;width:3.00px;height:1.00px;background:#8a8a8a;"></div><div class="b" style="left:147.50px;top:150.82px;width:5.50px;height:1.00px;background:#8a8a8a;"></div><div class="b" style="left:150.00px;top:155.50px;width:3.00px;height:1.00px;background:#8a8a8a;"></div><div class="b" style="left:147.50px;top:160.18px;width:5.50px;height:1.00px;background:#8a8a8a;"></div><div class="b" style="left:150.00px;top:164.86px;width:3.00px;height:1.00px;background:#8a8a8a;"></div><div class="b" style="left:147.50px;top:169.54px;width:5.50px;height:1.00px;background:#8a8a8a;"></div><div class="b" style="left:150.00px;top:174.22px;width:3.00px;height:1.00px;background:#8a8a8a;"></div><div class="b" style="left:147.50px;top:178.90px;width:5.50px;height:1.00px;background:#8a8a8a;"></div><div class="b" style="left:150.00px;top:183.58px;width:3.00px;height:1.00px;background:#8a8a8a;"></div><div class="b" style="left:147.50px;top:188.26px;width:5.50px;height:1.00px;background:#8a8a8a;"></div><div class="b" style="left:150.00px;top:192.94px;width:3.00px;height:1.00px;background:#8a8a8a;"></div><div class="b" style="left:147.50px;top:197.62px;width:5.50px;height:1.00px;background:#8a8a8a;"></div><div class="b" style="left:150.00px;top:202.30px;width:3.00px;height:1.00px;background:#8a8a8a;"></div><div class="b" style="left:147.50px;top:206.98px;width:5.50px;height:1.00px;background:#8a8a8a;"></div><div class="b" style="left:150.00px;top:211.66px;width:3.00px;height:1.00px;background:#8a8a8a;"></div><div class="b" style="left:147.50px;top:216.34px;width:5.50px;height:1.00px;background:#8a8a8a;"></div><div class="b" style="left:150.00px;top:221.02px;width:3.00px;height:1.00px;background:#8a8a8a;"></div><div class="b" style="left:147.50px;top:225.70px;width:5.50px;height:1.00px;background:#8a8a8a;"></div><div class="b" style="left:150.00px;top:230.38px;width:3.00px;height:1.00px;background:#8a8a8a;"></div><div class="b" style="left:147.50px;top:235.06px;width:5.50px;height:1.00px;background:#8a8a8a;"></div><div class="b" style="left:150.00px;top:239.74px;width:3.00px;height:1.00px;background:#8a8a8a;"></div><div class="b" style="left:147.50px;top:244.42px;width:5.50px;height:1.00px;background:#8a8a8a;"></div><div class="b" style="left:150.00px;top:249.10px;width:3.00px;height:1.00px;background:#8a8a8a;"></div><div class="b" style="left:147.50px;top:253.78px;width:5.50px;height:1.00px;background:#8a8a8a;"></div><div class="b" style="left:150.00px;top:258.46px;width:3.00px;height:1.00px;background:#8a8a8a;"></div><div class="b" style="left:147.50px;top:263.14px;width:5.50px;height:1.00px;background:#8a8a8a;"></div><div class="b" style="left:150.00px;top:267.82px;width:3.00px;height:1.00px;background:#8a8a8a;"></div><div class="b" style="left:147.50px;top:272.50px;width:5.50px;height:1.00px;background:#8a8a8a;"></div><div class="b" style="left:150.00px;top:277.18px;width:3.00px;height:1.00px;background:#8a8a8a;"></div><div class="b" style="left:147.50px;top:281.86px;width:5.50px;height:1.00px;background:#8a8a8a;"></div><div class="b" style="left:150.00px;top:286.54px;width:3.00px;height:1.00px;background:#8a8a8a;"></div><div class="b" style="left:147.50px;top:291.22px;width:5.50px;height:1.00px;background:#8a8a8a;"></div><div class="b" style="left:150.00px;top:295.90px;width:3.00px;height:1.00px;background:#8a8a8a;"></div><div class="b" style="left:147.50px;top:300.58px;width:5.50px;height:1.00px;background:#8a8a8a;"></div><div class="b" style="left:150.00px;top:305.26px;width:3.00px;height:1.00px;background:#8a8a8a;"></div><div class="b" style="left:147.50px;top:309.94px;width:5.50px;height:1.00px;background:#8a8a8a;"></div><div class="b" style="left:150.00px;top:314.62px;width:3.00px;height:1.00px;background:#8a8a8a;"></div><div class="b" style="left:147.50px;top:319.30px;width:5.50px;height:1.00px;background:#8a8a8a;"></div><div class="b" style="left:150.00px;top:323.98px;width:3.00px;height:1.00px;background:#8a8a8a;"></div><div class="b" style="left:147.50px;top:328.66px;width:5.50px;height:1.00px;background:#8a8a8a;"></div><div class="b" style="left:150.00px;top:333.34px;width:3.00px;height:1.00px;background:#8a8a8a;"></div><div class="b" style="left:147.50px;top:338.02px;width:5.50px;height:1.00px;background:#8a8a8a;"></div><div class="b" style="left:150.00px;top:342.70px;width:3.00px;height:1.00px;background:#8a8a8a;"></div><div class="b" style="left:147.50px;top:347.38px;width:5.50px;height:1.00px;background:#8a8a8a;"></div><div class="b" style="left:150.00px;top:352.06px;width:3.00px;height:1.00px;background:#8a8a8a;"></div><div class="b" style="left:147.50px;top:356.74px;width:5.50px;height:1.00px;background:#8a8a8a;"></div><div class="b" style="left:150.00px;top:361.42px;width:3.00px;height:1.00px;background:#8a8a8a;"></div><div class="b" style="left:147.50px;top:366.10px;width:5.50px;height:1.00px;background:#8a8a8a;"></div><div class="b" style="left:150.00px;top:370.78px;width:3.00px;height:1.00px;background:#8a8a8a;"></div><div class="b" style="left:147.50px;top:375.46px;width:5.50px;height:1.00px;background:#8a8a8a;"></div><div class="b" style="left:150.00px;top:380.14px;width:3.00px;height:1.00px;background:#8a8a8a;"></div><div class="b" style="left:147.50px;top:384.82px;width:5.50px;height:1.00px;background:#8a8a8a;"></div><div class="b" style="left:150.00px;top:389.50px;width:3.00px;height:1.00px;background:#8a8a8a;"></div><div class="b" style="left:147.50px;top:394.18px;width:5.50px;height:1.00px;background:#8a8a8a;"></div><div class="b" style="left:150.00px;top:398.86px;width:3.00px;height:1.00px;background:#8a8a8a;"></div><div class="b" style="left:147.50px;top:403.54px;width:5.50px;height:1.00px;background:#8a8a8a;"></div><div class="b" style="left:150.00px;top:408.22px;width:3.00px;height:1.00px;background:#8a8a8a;"></div><div class="b" style="left:147.50px;top:412.90px;width:5.50px;height:1.00px;background:#8a8a8a;"></div><div class="b" style="left:150.00px;top:417.58px;width:3.00px;height:1.00px;background:#8a8a8a;"></div><div class="b" style="left:147.50px;top:422.26px;width:5.50px;height:1.00px;background:#8a8a8a;"></div><div class="b" style="left:150.00px;top:426.94px;width:3.00px;height:1.00px;background:#8a8a8a;"></div><div class="b" style="left:147.50px;top:431.62px;width:5.50px;height:1.00px;background:#8a8a8a;"></div><div class="b" style="left:150.00px;top:436.30px;width:3.00px;height:1.00px;background:#8a8a8a;"></div><div class="b" style="left:147.50px;top:440.98px;width:5.50px;height:1.00px;background:#8a8a8a;"></div><div class="b" style="left:150.00px;top:445.66px;width:3.00px;height:1.00px;background:#8a8a8a;"></div><div class="b" style="left:147.50px;top:450.34px;width:5.50px;height:1.00px;background:#8a8a8a;"></div><div class="b" style="left:150.00px;top:455.02px;width:3.00px;height:1.00px;background:#8a8a8a;"></div><div class="b" style="left:147.50px;top:459.70px;width:5.50px;height:1.00px;background:#8a8a8a;"></div><div class="b" style="left:276px;top:101px;width:634px;height:359px;background:#fcfcfc;overflow:hidden"><div class="b" style="left:0.00px;top:0.80px;width:634.00px;height:200.40px;background:linear-gradient(90deg,#2e5092 0%,#3a6ea7 25%,#4491ba 50%,#4dabc5 70%,#55b9cb 85%,#57bccc 100%);"></div><div class="t" style="left:-118.50px;width:400px;text-align:center;top:33.91px;font-size:10.5px;line-height:10.5px;color:#fff;font-weight:400;">Company</div><div class="t" style="left:-118.40px;width:400px;text-align:center;top:49.40px;font-size:13px;line-height:13px;color:#fff;font-weight:700;">LOGO</div><div class="t" style="left:116.50px;width:400px;text-align:center;top:29.58px;font-size:21.4px;line-height:21.4px;color:#fff;font-weight:700;">Yearly Roadmap Template</div><div class="t" style="left:116.70px;width:400px;text-align:center;top:59.81px;font-size:11.8px;line-height:11.8px;color:#fff;font-weight:400;">Roadmap Tagline</div><div class="t" style="left:353.80px;width:400px;text-align:center;top:37.25px;font-size:23.8px;line-height:23.8px;color:#fff;font-weight:700;">2024</div><div class="b" style="left:9.00px;top:81.00px;width:615.00px;height:264.00px;background:#fafbfb;border-radius:12px;box-shadow:0 2px 3px rgba(0,0,0,0.13);"></div><div class="b" style="left:20.00px;top:98.20px;width:110.40px;height:103.30px;background:#f0f8fa;"></div><div class="t" style="left:32.00px;top:114.95px;font-size:10.1px;line-height:10.1px;color:#3d8db0;font-weight:700;">Features :</div><div class="b" style="left:33.00px;top:137.60px;width:2.20px;height:2.20px;border-radius:50%;background:#4aa0c0;"></div><div class="t" style="left:40.30px;top:134.98px;font-size:7.35px;line-height:7.35px;color:#474b4d;font-weight:400;">Lorem ipsum dolour</div><div class="b" style="left:33.00px;top:147.60px;width:2.20px;height:2.20px;border-radius:50%;background:#4aa0c0;"></div><div class="t" style="left:40.30px;top:144.98px;font-size:7.35px;line-height:7.35px;color:#474b4d;font-weight:400;">sit amet, adipiscing elit,</div><div class="t" style="left:40.30px;top:153.98px;font-size:7.35px;line-height:7.35px;color:#474b4d;font-weight:400;">sed do Ut labore</div><div class="b" style="left:33.00px;top:166.10px;width:2.20px;height:2.20px;border-radius:50%;background:#4aa0c0;"></div><div class="t" style="left:40.30px;top:163.48px;font-size:7.35px;line-height:7.35px;color:#474b4d;font-weight:400;">et dolore magna.</div><div class="b" style="left:33.00px;top:175.40px;width:2.20px;height:2.20px;border-radius:50%;background:#4aa0c0;"></div><div class="t" style="left:40.30px;top:172.78px;font-size:7.35px;line-height:7.35px;color:#474b4d;font-weight:400;">Lorem ipsum dolour</div><div class="b" style="left:139.80px;top:98.20px;width:110.40px;height:103.30px;background:#f1f0ed;"></div><div class="t" style="left:151.80px;top:114.95px;font-size:10.1px;line-height:10.1px;color:#3f3f3f;font-weight:700;">Features :</div><div class="b" style="left:152.80px;top:137.60px;width:2.20px;height:2.20px;border-radius:50%;background:#555;"></div><div class="t" style="left:160.10px;top:134.98px;font-size:7.35px;line-height:7.35px;color:#474b4d;font-weight:400;">Lorem ipsum dolour</div><div class="b" style="left:152.80px;top:147.60px;width:2.20px;height:2.20px;border-radius:50%;background:#555;"></div><div class="t" style="left:160.10px;top:144.98px;font-size:7.35px;line-height:7.35px;color:#474b4d;font-weight:400;">sit amet, adipiscing elit,</div><div class="t" style="left:160.10px;top:153.98px;font-size:7.35px;line-height:7.35px;color:#474b4d;font-weight:400;">sed do Ut labore</div><div class="b" style="left:152.80px;top:166.10px;width:2.20px;height:2.20px;border-radius:50%;background:#555;"></div><div class="t" style="left:160.10px;top:163.48px;font-size:7.35px;line-height:7.35px;color:#474b4d;font-weight:400;">et dolore magna.</div><div class="b" style="left:152.80px;top:175.40px;width:2.20px;height:2.20px;border-radius:50%;background:#555;"></div><div class="t" style="left:160.10px;top:172.78px;font-size:7.35px;line-height:7.35px;color:#474b4d;font-weight:400;">Lorem ipsum dolour</div><div class="b" style="left:260.30px;top:98.20px;width:110.40px;height:103.30px;background:#f1f0ed;"></div><div class="t" style="left:272.30px;top:114.95px;font-size:10.1px;line-height:10.1px;color:#3f3f3f;font-weight:700;">Features :</div><div class="b" style="left:273.30px;top:137.60px;width:2.20px;height:2.20px;border-radius:50%;background:#555;"></div><div class="t" style="left:280.60px;top:134.98px;font-size:7.35px;line-height:7.35px;color:#474b4d;font-weight:400;">Lorem ipsum dolour</div><div class="b" style="left:273.30px;top:147.60px;width:2.20px;height:2.20px;border-radius:50%;background:#555;"></div><div class="t" style="left:280.60px;top:144.98px;font-size:7.35px;line-height:7.35px;color:#474b4d;font-weight:400;">sit amet, adipiscing elit,</div><div class="t" style="left:280.60px;top:153.98px;font-size:7.35px;line-height:7.35px;color:#474b4d;font-weight:400;">sed do Ut labore</div><div class="b" style="left:273.30px;top:166.10px;width:2.20px;height:2.20px;border-radius:50%;background:#555;"></div><div class="t" style="left:280.60px;top:163.48px;font-size:7.35px;line-height:7.35px;color:#474b4d;font-weight:400;">et dolore magna.</div><div class="b" style="left:273.30px;top:175.40px;width:2.20px;height:2.20px;border-radius:50%;background:#555;"></div><div class="t" style="left:280.60px;top:172.78px;font-size:7.35px;line-height:7.35px;color:#474b4d;font-weight:400;">Lorem ipsum dolour</div><div class="b" style="left:380.80px;top:98.20px;width:110.40px;height:103.30px;background:#f1f0ed;"></div><div class="t" style="left:392.80px;top:114.95px;font-size:10.1px;line-height:10.1px;color:#3f3f3f;font-weight:700;">Features :</div><div class="b" style="left:393.80px;top:137.60px;width:2.20px;height:2.20px;border-radius:50%;background:#555;"></div><div class="t" style="left:401.10px;top:134.98px;font-size:7.35px;line-height:7.35px;color:#474b4d;font-weight:400;">Lorem ipsum dolour</div><div class="b" style="left:393.80px;top:147.60px;width:2.20px;height:2.20px;border-radius:50%;background:#555;"></div><div class="t" style="left:401.10px;top:144.98px;font-size:7.35px;line-height:7.35px;color:#474b4d;font-weight:400;">sit amet, adipiscing elit,</div><div class="t" style="left:401.10px;top:153.98px;font-size:7.35px;line-height:7.35px;color:#474b4d;font-weight:400;">sed do Ut labore</div><div class="b" style="left:393.80px;top:166.10px;width:2.20px;height:2.20px;border-radius:50%;background:#555;"></div><div class="t" style="left:401.10px;top:163.48px;font-size:7.35px;line-height:7.35px;color:#474b4d;font-weight:400;">et dolore magna.</div><div class="b" style="left:393.80px;top:175.40px;width:2.20px;height:2.20px;border-radius:50%;background:#555;"></div><div class="t" style="left:401.10px;top:172.78px;font-size:7.35px;line-height:7.35px;color:#474b4d;font-weight:400;">Lorem ipsum dolour</div><div class="b" style="left:501.40px;top:98.20px;width:110.40px;height:103.30px;background:#f1f0ed;"></div><div class="t" style="left:513.40px;top:114.95px;font-size:10.1px;line-height:10.1px;color:#3f3f3f;font-weight:700;">Features :</div><div class="b" style="left:514.40px;top:137.60px;width:2.20px;height:2.20px;border-radius:50%;background:#555;"></div><div class="t" style="left:521.70px;top:134.98px;font-size:7.35px;line-height:7.35px;color:#474b4d;font-weight:400;">Lorem ipsum dolour</div><div class="b" style="left:514.40px;top:147.60px;width:2.20px;height:2.20px;border-radius:50%;background:#555;"></div><div class="t" style="left:521.70px;top:144.98px;font-size:7.35px;line-height:7.35px;color:#474b4d;font-weight:400;">sit amet, adipiscing elit,</div><div class="t" style="left:521.70px;top:153.98px;font-size:7.35px;line-height:7.35px;color:#474b4d;font-weight:400;">sed do Ut labore</div><div class="b" style="left:514.40px;top:166.10px;width:2.20px;height:2.20px;border-radius:50%;background:#555;"></div><div class="t" style="left:521.70px;top:163.48px;font-size:7.35px;line-height:7.35px;color:#474b4d;font-weight:400;">et dolore magna.</div><div class="b" style="left:514.40px;top:175.40px;width:2.20px;height:2.20px;border-radius:50%;background:#555;"></div><div class="t" style="left:521.70px;top:172.78px;font-size:7.35px;line-height:7.35px;color:#474b4d;font-weight:400;">Lorem ipsum dolour</div><div class="b" style="left:73.00px;top:201.50px;width:1.00px;height:29.00px;background:repeating-linear-gradient(to bottom,#cfcfcf 0 1px,transparent 1px 3px);"></div><div class="b" style="left:73.00px;top:256.50px;width:1.00px;height:28.00px;background:repeating-linear-gradient(to bottom,#cfcfcf 0 1px,transparent 1px 3px);"></div><div class="b" style="left:113.21px;top:256.50px;width:1.00px;height:28.00px;background:repeating-linear-gradient(to bottom,#cfcfcf 0 1px,transparent 1px 3px);"></div><div class="b" style="left:153.42px;top:256.50px;width:1.00px;height:28.00px;background:repeating-linear-gradient(to bottom,#cfcfcf 0 1px,transparent 1px 3px);"></div><div class="b" style="left:193.63px;top:201.50px;width:1.00px;height:29.00px;background:repeating-linear-gradient(to bottom,#cfcfcf 0 1px,transparent 1px 3px);"></div><div class="b" style="left:193.63px;top:256.50px;width:1.00px;height:28.00px;background:repeating-linear-gradient(to bottom,#cfcfcf 0 1px,transparent 1px 3px);"></div><div class="b" style="left:233.84px;top:256.50px;width:1.00px;height:28.00px;background:repeating-linear-gradient(to bottom,#cfcfcf 0 1px,transparent 1px 3px);"></div><div class="b" style="left:274.05px;top:256.50px;width:1.00px;height:28.00px;background:repeating-linear-gradient(to bottom,#cfcfcf 0 1px,transparent 1px 3px);"></div><div class="b" style="left:314.26px;top:201.50px;width:1.00px;height:29.00px;background:repeating-linear-gradient(to bottom,#cfcfcf 0 1px,transparent 1px 3px);"></div><div class="b" style="left:314.26px;top:256.50px;width:1.00px;height:28.00px;background:repeating-linear-gradient(to bottom,#cfcfcf 0 1px,transparent 1px 3px);"></div><div class="b" style="left:354.47px;top:256.50px;width:1.00px;height:28.00px;background:repeating-linear-gradient(to bottom,#cfcfcf 0 1px,transparent 1px 3px);"></div><div class="b" style="left:394.68px;top:256.50px;width:1.00px;height:28.00px;background:repeating-linear-gradient(to bottom,#cfcfcf 0 1px,transparent 1px 3px);"></div><div class="b" style="left:434.89px;top:201.50px;width:1.00px;height:29.00px;background:repeating-linear-gradient(to bottom,#cfcfcf 0 1px,transparent 1px 3px);"></div><div class="b" style="left:434.89px;top:256.50px;width:1.00px;height:28.00px;background:repeating-linear-gradient(to bottom,#cfcfcf 0 1px,transparent 1px 3px);"></div><div class="b" style="left:475.10px;top:256.50px;width:1.00px;height:28.00px;background:repeating-linear-gradient(to bottom,#cfcfcf 0 1px,transparent 1px 3px);"></div><div class="b" style="left:515.31px;top:256.50px;width:1.00px;height:28.00px;background:repeating-linear-gradient(to bottom,#cfcfcf 0 1px,transparent 1px 3px);"></div><div class="b" style="left:555.52px;top:201.50px;width:1.00px;height:29.00px;background:repeating-linear-gradient(to bottom,#cfcfcf 0 1px,transparent 1px 3px);"></div><div class="b" style="left:555.52px;top:256.50px;width:1.00px;height:28.00px;background:repeating-linear-gradient(to bottom,#cfcfcf 0 1px,transparent 1px 3px);"></div><div class="b" style="left:73.50px;top:285.50px;width:482.52px;height:1.00px;background:repeating-linear-gradient(to right,#e2e2e2 0 2px,transparent 2px 3px);"></div><div class="b" style="left:60.20px;top:230.50px;width:26.60px;height:26.50px;background:#f0f8fa;"></div><div class="t" style="left:-126.50px;width:400px;text-align:center;top:239.19px;font-size:11px;line-height:11px;color:#2b2b2b;font-weight:700;">00</div><div class="b" style="left:68.50px;top:281.00px;width:10.00px;height:10.00px;border-radius:50%;background:radial-gradient(circle at 65% 32%,#66b9dc 0%,#3c92c2 40%,#2a67a2 100%);"></div><div class="t" style="left:-126.50px;width:400px;text-align:center;top:303.97px;font-size:8.3px;line-height:8.3px;color:#505050;font-weight:400;">Dec</div><div class="t" style="left:-126.50px;width:400px;text-align:center;top:320.63px;font-size:11.3px;line-height:11.3px;color:#262626;font-weight:700;">Start</div><div class="b" style="left:100.41px;top:230.50px;width:26.60px;height:26.50px;background:#f1f0ed;"></div><div class="t" style="left:-86.29px;width:400px;text-align:center;top:239.19px;font-size:11px;line-height:11px;color:#2b2b2b;font-weight:700;">01</div><div class="b" style="left:110.91px;top:283.20px;width:5.60px;height:5.60px;border-radius:50%;background:radial-gradient(circle at 65% 32%,#66b9dc 0%,#3c92c2 40%,#2a67a2 100%);"></div><div class="t" style="left:-86.29px;width:400px;text-align:center;top:303.97px;font-size:8.3px;line-height:8.3px;color:#505050;font-weight:400;">Jan</div><div class="b" style="left:140.62px;top:230.50px;width:26.60px;height:26.50px;background:#f1f0ed;"></div><div class="t" style="left:-46.08px;width:400px;text-align:center;top:239.19px;font-size:11px;line-height:11px;color:#2b2b2b;font-weight:700;">02</div><div class="b" style="left:151.12px;top:283.20px;width:5.60px;height:5.60px;border-radius:50%;background:radial-gradient(circle at 65% 32%,#66b9dc 0%,#3c92c2 40%,#2a67a2 100%);"></div><div class="t" style="left:-46.08px;width:400px;text-align:center;top:303.97px;font-size:8.3px;line-height:8.3px;color:#505050;font-weight:400;">Feb</div><div class="b" style="left:180.83px;top:230.50px;width:26.60px;height:26.50px;background:#f1f0ed;"></div><div class="t" style="left:-5.87px;width:400px;text-align:center;top:239.19px;font-size:11px;line-height:11px;color:#2b2b2b;font-weight:700;">03</div><div class="b" style="left:189.13px;top:281.00px;width:10.00px;height:10.00px;border-radius:50%;background:radial-gradient(circle at 65% 32%,#66b9dc 0%,#3c92c2 40%,#2a67a2 100%);"></div><div class="t" style="left:-5.87px;width:400px;text-align:center;top:303.97px;font-size:8.3px;line-height:8.3px;color:#505050;font-weight:400;">Mar</div><div class="t" style="left:-5.87px;width:400px;text-align:center;top:320.63px;font-size:11.3px;line-height:11.3px;color:#262626;font-weight:700;">Q1</div><div class="b" style="left:221.04px;top:230.50px;width:26.60px;height:26.50px;background:#f1f0ed;"></div><div class="t" style="left:34.34px;width:400px;text-align:center;top:239.19px;font-size:11px;line-height:11px;color:#2b2b2b;font-weight:700;">04</div><div class="b" style="left:231.54px;top:283.20px;width:5.60px;height:5.60px;border-radius:50%;background:radial-gradient(circle at 65% 32%,#66b9dc 0%,#3c92c2 40%,#2a67a2 100%);"></div><div class="t" style="left:34.34px;width:400px;text-align:center;top:303.97px;font-size:8.3px;line-height:8.3px;color:#505050;font-weight:400;">Apr</div><div class="b" style="left:261.25px;top:230.50px;width:26.60px;height:26.50px;background:#f1f0ed;"></div><div class="t" style="left:74.55px;width:400px;text-align:center;top:239.19px;font-size:11px;line-height:11px;color:#2b2b2b;font-weight:700;">05</div><div class="b" style="left:271.75px;top:283.20px;width:5.60px;height:5.60px;border-radius:50%;background:radial-gradient(circle at 65% 32%,#66b9dc 0%,#3c92c2 40%,#2a67a2 100%);"></div><div class="t" style="left:74.55px;width:400px;text-align:center;top:303.97px;font-size:8.3px;line-height:8.3px;color:#505050;font-weight:400;">May</div><div class="b" style="left:301.46px;top:230.50px;width:26.60px;height:26.50px;background:#f1f0ed;"></div><div class="t" style="left:114.76px;width:400px;text-align:center;top:239.19px;font-size:11px;line-height:11px;color:#2b2b2b;font-weight:700;">06</div><div class="b" style="left:309.76px;top:281.00px;width:10.00px;height:10.00px;border-radius:50%;background:radial-gradient(circle at 65% 32%,#66b9dc 0%,#3c92c2 40%,#2a67a2 100%);"></div><div class="t" style="left:114.76px;width:400px;text-align:center;top:303.97px;font-size:8.3px;line-height:8.3px;color:#505050;font-weight:400;">Jun</div><div class="t" style="left:114.76px;width:400px;text-align:center;top:320.63px;font-size:11.3px;line-height:11.3px;color:#262626;font-weight:700;">Q2</div><div class="b" style="left:341.67px;top:230.50px;width:26.60px;height:26.50px;background:#f1f0ed;"></div><div class="t" style="left:154.97px;width:400px;text-align:center;top:239.19px;font-size:11px;line-height:11px;color:#2b2b2b;font-weight:700;">07</div><div class="b" style="left:352.17px;top:283.20px;width:5.60px;height:5.60px;border-radius:50%;background:radial-gradient(circle at 65% 32%,#66b9dc 0%,#3c92c2 40%,#2a67a2 100%);"></div><div class="t" style="left:154.97px;width:400px;text-align:center;top:303.97px;font-size:8.3px;line-height:8.3px;color:#505050;font-weight:400;">Jul</div><div class="b" style="left:381.88px;top:230.50px;width:26.60px;height:26.50px;background:#f1f0ed;"></div><div class="t" style="left:195.18px;width:400px;text-align:center;top:239.19px;font-size:11px;line-height:11px;color:#2b2b2b;font-weight:700;">08</div><div class="b" style="left:392.38px;top:283.20px;width:5.60px;height:5.60px;border-radius:50%;background:radial-gradient(circle at 65% 32%,#66b9dc 0%,#3c92c2 40%,#2a67a2 100%);"></div><div class="t" style="left:195.18px;width:400px;text-align:center;top:303.97px;font-size:8.3px;line-height:8.3px;color:#505050;font-weight:400;">Aug</div><div class="b" style="left:422.09px;top:230.50px;width:26.60px;height:26.50px;background:#f1f0ed;"></div><div class="t" style="left:235.39px;width:400px;text-align:center;top:239.19px;font-size:11px;line-height:11px;color:#2b2b2b;font-weight:700;">09</div><div class="b" style="left:430.39px;top:281.00px;width:10.00px;height:10.00px;border-radius:50%;background:radial-gradient(circle at 65% 32%,#66b9dc 0%,#3c92c2 40%,#2a67a2 100%);"></div><div class="t" style="left:235.39px;width:400px;text-align:center;top:303.97px;font-size:8.3px;line-height:8.3px;color:#505050;font-weight:400;">Sep</div><div class="t" style="left:235.39px;width:400px;text-align:center;top:320.63px;font-size:11.3px;line-height:11.3px;color:#262626;font-weight:700;">Q3</div><div class="b" style="left:462.30px;top:230.50px;width:26.60px;height:26.50px;background:#f1f0ed;"></div><div class="t" style="left:275.60px;width:400px;text-align:center;top:239.19px;font-size:11px;line-height:11px;color:#2b2b2b;font-weight:700;">10</div><div class="b" style="left:472.80px;top:283.20px;width:5.60px;height:5.60px;border-radius:50%;background:radial-gradient(circle at 65% 32%,#66b9dc 0%,#3c92c2 40%,#2a67a2 100%);"></div><div class="t" style="left:275.60px;width:400px;text-align:center;top:303.97px;font-size:8.3px;line-height:8.3px;color:#505050;font-weight:400;">Oct</div><div class="b" style="left:502.51px;top:230.50px;width:26.60px;height:26.50px;background:#f1f0ed;"></div><div class="t" style="left:315.81px;width:400px;text-align:center;top:239.19px;font-size:11px;line-height:11px;color:#2b2b2b;font-weight:700;">11</div><div class="b" style="left:513.01px;top:283.20px;width:5.60px;height:5.60px;border-radius:50%;background:radial-gradient(circle at 65% 32%,#66b9dc 0%,#3c92c2 40%,#2a67a2 100%);"></div><div class="t" style="left:315.81px;width:400px;text-align:center;top:303.97px;font-size:8.3px;line-height:8.3px;color:#505050;font-weight:400;">Nov</div><div class="b" style="left:542.72px;top:230.50px;width:26.60px;height:26.50px;background:#f1f0ed;"></div><div class="t" style="left:356.02px;width:400px;text-align:center;top:239.19px;font-size:11px;line-height:11px;color:#2b2b2b;font-weight:700;">12</div><div class="b" style="left:551.02px;top:281.00px;width:10.00px;height:10.00px;border-radius:50%;background:radial-gradient(circle at 65% 32%,#66b9dc 0%,#3c92c2 40%,#2a67a2 100%);"></div><div class="t" style="left:356.02px;width:400px;text-align:center;top:303.97px;font-size:8.3px;line-height:8.3px;color:#505050;font-weight:400;">Dec</div><div class="t" style="left:356.02px;width:400px;text-align:center;top:320.63px;font-size:11.3px;line-height:11.3px;color:#262626;font-weight:700;">Q4</div></div><div class="b" style="left:275.00px;top:101.50px;width:1.00px;height:359.00px;background:#e2e2e2;"></div><div class="b" style="left:1021.50px;top:97.00px;width:3.00px;height:370.00px;background:#dadce0;border-radius:2px 0 0 2px;"></div><div class="b" style="left:571.00px;top:473.00px;width:32.00px;height:2.00px;background:#5f6368;border-radius:1px;"></div><div class="b" style="left:154.50px;top:488.00px;width:864.00px;height:32.00px;background:#edf2fa;border-radius:6px;"></div><div class="t" style="left:165.00px;top:498.03px;font-size:10.6px;line-height:10.6px;color:#2a2a2a;font-weight:400;transform:scaleX(0.91);transform-origin:0 0;">Click to add speaker notes</div><svg class="b" style="left:15px;top:501px" width="10" height="10" viewBox="0 0 10 10"><rect x="0.6" y="0.6" width="3.3" height="3.3" fill="none" stroke="#444746" stroke-width="1.1"/><rect x="6.1" y="0.6" width="3.3" height="3.3" fill="none" stroke="#444746" stroke-width="1.1"/><rect x="0.6" y="6.1" width="3.3" height="3.3" fill="none" stroke="#444746" stroke-width="1.1"/><rect x="6.1" y="6.1" width="3.3" height="3.3" fill="none" stroke="#444746" stroke-width="1.1"/></svg><svg class="b" style="left:49.5px;top:502.5px" width="6" height="9" viewBox="0 0 6 9"><path d="M5 1L1.5 4.5 5 8" fill="none" stroke="#444746" stroke-width="1.5"/></svg><div class="b" style="left:1014.00px;top:499.50px;width:26.00px;height:26.00px;background:#fff;border-radius:50%;box-shadow:0 0 2px rgba(0,0,0,.25);"></div><svg class="b" style="left:1019px;top:508px" width="5" height="8" viewBox="0 0 5 8"><path d="M4.2 0.8L1 4l3.2 3.2" fill="none" stroke="#444746" stroke-width="1.4"/></svg><svg class="b" style="left:884px;top:482px" width="21" height="26" viewBox="0 0 21 26"><path d="M12.2 2.3 Q3.5 7.5 4 10.5 Q4.6 13 9.2 16.2" fill="none" stroke="#f06a26" stroke-width="4.6" stroke-linecap="round"/><path d="M9 10.2 Q17.6 14 17.3 16.5 Q16.6 19.5 9.5 23.8" fill="none" stroke="#6b6b6b" stroke-width="4.6" stroke-linecap="round"/></svg><div class="t" style="left:906.00px;top:481.10px;font-size:17.6px;line-height:17.6px;color:#6b6b6b;font-weight:700;letter-spacing:-0.1px;">SlideUpLift</div><div class="b" style="left:923.30px;top:483.00px;width:3.00px;height:2.90px;background:#f06a26;"></div><div class="b" style="left:982.30px;top:483.00px;width:3.00px;height:2.90px;background:#f06a26;"></div><div class="t" style="left:908.50px;top:499.66px;font-size:7.25px;line-height:7.25px;color:#6b6b6b;font-weight:700;letter-spacing:0.05px;">Your Presentation Partner</div><div class="b" style="left:211.30px;top:240.30px;width:17.40px;height:17.40px;background:#faf13a;border-radius:50%;"></div><svg class="b" style="left:217.5px;top:245.5px" width="6" height="8" viewBox="0 0 6 8"><path d="M0.3 0.3L5.6 4.6 3.2 4.9 4.2 7.4 3.2 7.8 2.2 5.4 0.5 6.8z" fill="#111"/></svg>
</body></html>
